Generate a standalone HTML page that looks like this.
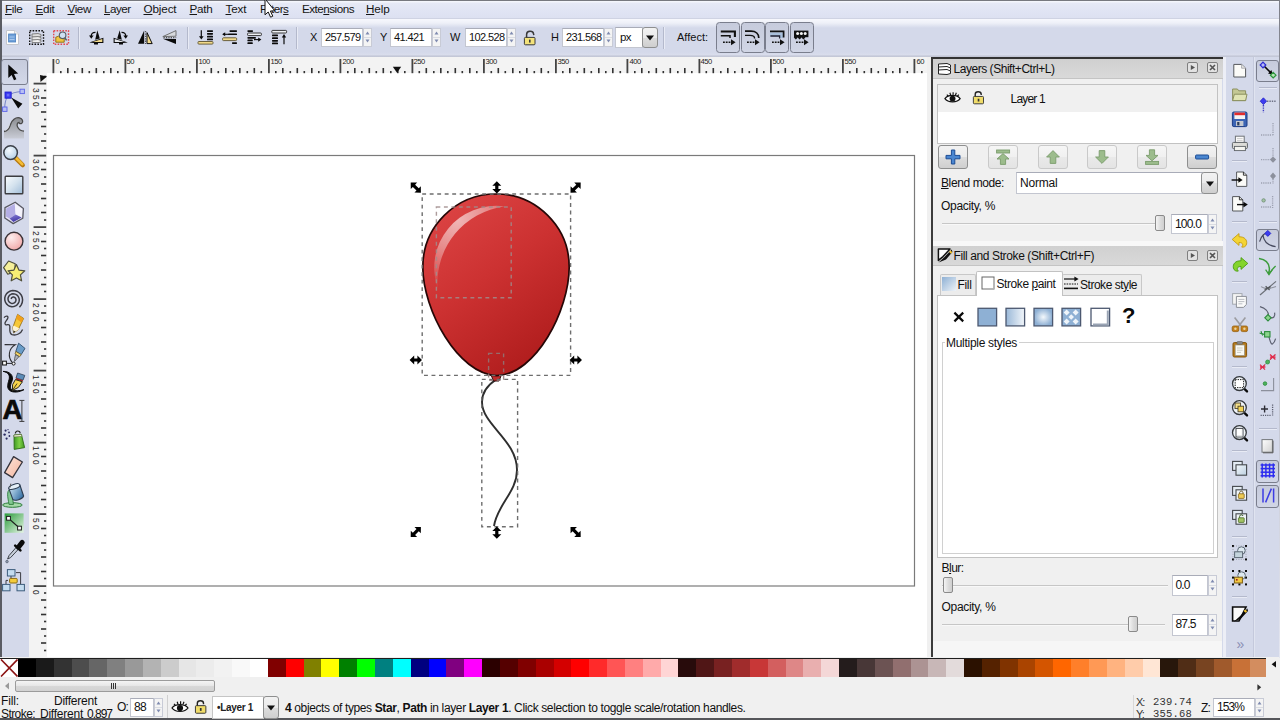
<!DOCTYPE html><html><head><meta charset="utf-8"><title>Inkscape</title><style>
*{box-sizing:border-box;margin:0;padding:0}
html,body{width:1280px;height:720px;overflow:hidden;background:#f0f0f0;font-family:"Liberation Sans", "DejaVu Sans", sans-serif;font-size:12px;color:#111;}
.a{position:absolute}
.t{position:absolute;white-space:nowrap;line-height:14px;height:14px}
u{text-decoration:underline;text-underline-offset:1px}
.inp{position:absolute;background:#fff;border:1px solid #c3c6d0;border-top-color:#a9acb8;font-size:11.5px;line-height:15px;padding-left:3px;white-space:nowrap;overflow:hidden}
.spin{position:absolute;width:9px;background:#f4f4f4;border:1px solid #c8cbd6}
.btn{position:absolute;border:1px solid #8e8f8f;border-radius:3px;background:linear-gradient(#f2f2f2,#ebebeb 50%,#dddddd 51%,#cfcfcf)}
.btnd{position:absolute;border:1px solid #c9c9c9;border-radius:3px;background:linear-gradient(#f6f6f6,#f0f0f0 50%,#e9e9e9 51%,#e4e4e4)}
.tog{position:absolute;border:1px solid #7a7e8d;border-radius:3px;background:linear-gradient(#c6cbdc,#d1d6e6)}
</style></head><body>
<div class="a" style="left:0;top:0;width:1280px;height:19px;background:linear-gradient(#f4f6fc 0,#f4f6fc 2px,#e6e9f6 3px,#e1e5f4 10px,#dde1f1 18px)"></div>
<div class="a" style="left:0;top:18px;width:1280px;height:1px;background:#cfd3e3"></div>
<div class="a" style="left:0;top:19px;width:1280px;height:38px;background:linear-gradient(#f7f8fd 0,#eef0f8 4px,#d4d9ea 9px,#d4d9ea 33px,#d9ddec 36px,#bfc3d3 37px,#c8ccdb 38px)"></div>
<div class="a" style="left:0;top:57px;width:29px;height:601px;background:#d4d9ea"></div>
<div class="a" style="left:1222px;top:57px;width:58px;height:601px;background:#d4d9ea"></div>
<div class="a" style="left:29px;top:57px;width:898px;height:600px;background:#fff"></div>
<div class="a" style="left:927px;top:57px;width:295px;height:600px;background:#f0f0f0"></div>
<div class="a" style="left:931px;top:57px;width:2px;height:600px;background:#3c3c3c"></div>
<div class="a" style="left:0;top:0;width:1280px;height:1px;background:#77797f"></div>
<div class="a" style="left:0;top:0;width:1.5px;height:720px;background:#5a5c63"></div>
<div class="a" style="left:0;top:718px;width:1280px;height:2px;background:#55565a"></div>
<div class="t" style="left:5px;top:2.1px;font-size:11.7px;letter-spacing:-0.338px;color:#151515;"><u>F</u>ile</div>
<div class="t" style="left:35.5px;top:2.1px;font-size:11.7px;letter-spacing:-0.290px;color:#151515;"><u>E</u>dit</div>
<div class="t" style="left:67.5px;top:2.1px;font-size:11.7px;letter-spacing:-0.412px;color:#151515;"><u>V</u>iew</div>
<div class="t" style="left:104px;top:2.1px;font-size:11.7px;letter-spacing:-0.553px;color:#151515;"><u>L</u>ayer</div>
<div class="t" style="left:143.5px;top:2.1px;font-size:11.7px;letter-spacing:-0.136px;color:#151515;"><u>O</u>bject</div>
<div class="t" style="left:189.5px;top:2.1px;font-size:11.7px;letter-spacing:-0.267px;color:#151515;"><u>P</u>ath</div>
<div class="t" style="left:225.5px;top:2.1px;font-size:11.7px;letter-spacing:-0.114px;color:#151515;"><u>T</u>ext</div>
<div class="t" style="left:260px;top:2.1px;font-size:11.7px;letter-spacing:-0.479px;color:#151515;">Filter<u>s</u></div>
<div class="t" style="left:302px;top:2.1px;font-size:11.7px;letter-spacing:-0.523px;color:#151515;">Exte<u>n</u>sions</div>
<div class="t" style="left:366px;top:2.1px;font-size:11.7px;letter-spacing:-0.141px;color:#151515;"><u>H</u>elp</div>
<svg class="a" style="left:5px;top:29px" width="15" height="17" viewBox="0 0 15 17" >
<path d="M1.5 1.5 L9.5 1.5 L13.5 5 L13.5 15.5 L1.5 15.5 Z" fill="#fdfdfd" stroke="#c4c6cc" stroke-width="1"/>
<path d="M9.5 1.5 L9.5 5 L13.5 5" fill="#eee" stroke="#c4c6cc" stroke-width="0.8"/>
<rect x="3.6" y="5" width="7" height="8" fill="#6fa0d8" stroke="#4a7fc0" stroke-width="0.8"/>
<path d="M4.5 8 L9.5 8 M4.5 10.5 L9.5 10.5" stroke="#a8c8ee" stroke-width="1"/></svg>
<svg class="a" style="left:28px;top:29px" width="17" height="17" viewBox="0 0 17 17" >
<rect x="1.7" y="1.7" width="13.8" height="13.6" fill="none" stroke="#111" stroke-width="1.4" stroke-dasharray="1.6 1.3"/>
<path d="M4 5 L10 4.5 L13 5.5 L13 7.5 L10 8.2 L4 8 Z" fill="#ddd" stroke="#777" stroke-width="0.9"/>
<path d="M4 8 L10 7.5 L13 8.5 L13 10.5 L10 11.2 L4 11 Z" fill="#e8e8e8" stroke="#777" stroke-width="0.9"/>
<path d="M4 11 L10 10.5 L13 11.5 L13 13 L10 13.6 L4 13.4 Z" fill="#f2f2f2" stroke="#777" stroke-width="0.9"/></svg>
<svg class="a" style="left:52px;top:29px" width="18" height="17" viewBox="0 0 18 17" >
<rect x="1.7" y="1.7" width="14.8" height="13.6" fill="none" stroke="#e44850" stroke-width="1.4" stroke-dasharray="1.6 1.3"/>
<path d="M3.8 8.2 L6.5 7.2 L8 8.2 L12.2 8.2 L12.2 13.2 L3.8 13.2 Z" fill="#f1c53e" stroke="#8a6a14" stroke-width="0.9"/>
<circle cx="10.6" cy="6.3" r="3.3" fill="#cfe0f3" stroke="#555c66" stroke-width="1.1"/>
<path d="M13 9 L14.6 11.4" stroke="#555c66" stroke-width="1.5"/></svg>
<div class="a" style="left:78px;top:27px;width:1px;height:22px;background:#b4b9cc"></div><div class="a" style="left:79px;top:27px;width:1px;height:22px;background:#e8ebf5"></div>
<svg class="a" style="left:88px;top:29px" width="17" height="17" viewBox="0 0 17 17" >
<path d="M9.3 1.3 L11.8 9.6 L7.2 10.8 Z" fill="#0a0a0a"/>
<path d="M1.2 13.6 L15.4 8.8 L15.4 14 L10 14 L10 15.6 L6 15.6 L6 14 Z" fill="#0a0a0a"/>
<path d="M4.5 13 L14.3 9.9 L14.3 13 Z" fill="#f1d98a"/>
<path d="M7.5 3.3 C4.5 3.2 3.2 5 3.2 7.2" fill="none" stroke="#0a0a0a" stroke-width="1.3"/>
<path d="M1 6.6 L5.6 6.6 L3.3 9.8 Z" fill="#0a0a0a"/></svg>
<svg class="a" style="left:112px;top:29px" width="17" height="17" viewBox="0 0 17 17" >
<g transform="translate(17 0) scale(-1 1)">
<path d="M9.3 1.3 L11.8 9.6 L7.2 10.8 Z" fill="#0a0a0a"/>
<path d="M1.2 13.6 L15.4 8.8 L15.4 14 L10 14 L10 15.6 L6 15.6 L6 14 Z" fill="#0a0a0a"/>
<path d="M4.5 13 L14.3 9.9 L14.3 13 Z" fill="#e4e6ea"/>
<path d="M7.5 3.3 C4.5 3.2 3.2 5 3.2 7.2" fill="none" stroke="#0a0a0a" stroke-width="1.3"/>
<path d="M1 6.6 L5.6 6.6 L3.3 9.8 Z" fill="#0a0a0a"/>
</g></svg>
<svg class="a" style="left:137px;top:29px" width="17" height="17" viewBox="0 0 17 17" >
<path d="M1 14.8 L7.2 1.6 L7.2 14.8 Z" fill="#0a0a0a"/>
<path d="M8.6 2 L8.6 15" stroke="#555" stroke-width="1.2" stroke-dasharray="1.3 1.1"/>
<path d="M10 3.6 L15.2 14.6 L10 14.6 Z" fill="#f1d98a" stroke="#0a0a0a" stroke-width="1"/></svg>
<svg class="a" style="left:161px;top:29px" width="17" height="17" viewBox="0 0 17 17" >
<path d="M1.8 7.6 L15 1.6 L15 7.2 Z" fill="#d8dade" stroke="#666" stroke-width="0.9"/>
<path d="M2.5 8.6 L15.2 8.6" stroke="#555" stroke-width="1.2" stroke-dasharray="1.3 1.1"/>
<path d="M1.8 9.8 L15 10 L15 15 Z" fill="#0a0a0a"/></svg>
<div class="a" style="left:187px;top:27px;width:1px;height:22px;background:#b4b9cc"></div><div class="a" style="left:188px;top:27px;width:1px;height:22px;background:#e8ebf5"></div>
<svg class="a" style="left:197px;top:29px" width="17" height="17" viewBox="0 0 17 17" >
<path d="M4.3 1.3 L4.3 9" stroke="#0a0a0a" stroke-width="1.2"/>
<path d="M2 7.2 L6.6 7.2 L4.3 10.6 Z" fill="#0a0a0a"/>
<g fill="#0a0a0a"><rect x="10" y="1.2" width="6" height="1.7" rx="0.6"/><rect x="10" y="4" width="6" height="1.7" rx="0.6"/><rect x="10" y="6.8" width="6" height="1.7" rx="0.6"/><rect x="10" y="9.6" width="6" height="1.7" rx="0.6"/></g>
<rect x="1" y="12.5" width="15" height="2.6" rx="0.8" fill="#f1d98a" stroke="#5d5330" stroke-width="0.9"/></svg>
<svg class="a" style="left:221px;top:29px" width="17" height="17" viewBox="0 0 17 17" >
<g fill="#0a0a0a"><rect x="8.5" y="1.2" width="7.5" height="1.7" rx="0.6"/><rect x="7" y="4.4" width="9" height="1.7" rx="0.6"/><rect x="11" y="13.2" width="5" height="1.7" rx="0.6"/></g>
<path d="M2 5.3 L7 5.3" stroke="#0a0a0a" stroke-width="1.1"/>
<path d="M1.2 5.3 L4.2 3.3 L4.2 7.3 Z" fill="#0a0a0a"/>
<rect x="1.6" y="8.8" width="14" height="2.8" rx="0.8" fill="#f1d98a" stroke="#5d5330" stroke-width="0.9"/>
<rect x="11" y="10.8" width="5" height="1.2" fill="#0a0a0a" opacity="0"/></svg>
<svg class="a" style="left:246px;top:29px" width="17" height="17" viewBox="0 0 17 17" >
<g fill="#0a0a0a"><rect x="1.4" y="1.2" width="5.6" height="1.7" rx="0.6"/><rect x="1.4" y="8" width="8.5" height="1.7" rx="0.6"/><rect x="1.4" y="10.6" width="5.4" height="1.7" rx="0.6"/><rect x="1.4" y="13.3" width="5.4" height="1.7" rx="0.6"/></g>
<rect x="1.6" y="4" width="13.8" height="2.6" rx="0.8" fill="#eef0f4" stroke="#222" stroke-width="0.9"/>
<path d="M8 10.6 L14 10.6" stroke="#0a0a0a" stroke-width="1.1"/>
<path d="M15.4 10.6 L12.2 8.4 L12.2 12.8 Z" fill="#0a0a0a"/></svg>
<svg class="a" style="left:270px;top:29px" width="18" height="17" viewBox="0 0 18 17" >
<rect x="1.8" y="1.4" width="14.8" height="2.6" rx="0.8" fill="#eef0f4" stroke="#222" stroke-width="0.9"/>
<g fill="#0a0a0a"><rect x="2" y="5.6" width="6" height="1.7" rx="0.6"/><rect x="2" y="8.3" width="6" height="1.7" rx="0.6"/><rect x="2" y="11" width="6" height="1.7" rx="0.6"/><rect x="2" y="13.6" width="6" height="1.7" rx="0.6"/></g>
<path d="M14 7 L14 15.2" stroke="#0a0a0a" stroke-width="1.2"/>
<path d="M11.8 8.4 L16.2 8.4 L14 5 Z" fill="#0a0a0a"/></svg>
<div class="a" style="left:296px;top:27px;width:1px;height:22px;background:#b4b9cc"></div><div class="a" style="left:297px;top:27px;width:1px;height:22px;background:#e8ebf5"></div>
<div class="t" style="left:310px;top:30px;font-size:11px;letter-spacing:-1.337px;">X</div><div class="inp" style="left:321px;top:28px;width:42px;height:19px"></div><div class="t" style="left:325px;top:30px;font-size:11px;letter-spacing:-0.609px;">257.579</div><div class="spin" style="left:363px;top:28px;height:19px"></div><svg class="a" style="left:363px;top:28px" width="9" height="19"><path d="M2.5 6.5 L6.5 6.5 L4.5 3.5 Z" fill="#7f8bb0"/><path d="M2.5 11.5 L6.5 11.5 L4.5 14.5 Z" fill="#7f8bb0"/><rect x="1" y="9" width="7" height="0.6" fill="#c8cbd6"/></svg>
<div class="t" style="left:380px;top:30px;font-size:11px;letter-spacing:-1.337px;">Y</div><div class="inp" style="left:390px;top:28px;width:42px;height:19px"></div><div class="t" style="left:394px;top:30px;font-size:11px;letter-spacing:-0.607px;">41.421</div><div class="spin" style="left:432px;top:28px;height:19px"></div><svg class="a" style="left:432px;top:28px" width="9" height="19"><path d="M2.5 6.5 L6.5 6.5 L4.5 3.5 Z" fill="#7f8bb0"/><path d="M2.5 11.5 L6.5 11.5 L4.5 14.5 Z" fill="#7f8bb0"/><rect x="1" y="9" width="7" height="0.6" fill="#c8cbd6"/></svg>
<div class="t" style="left:450px;top:30px;font-size:11px;letter-spacing:-0.382px;">W</div><div class="inp" style="left:465px;top:28px;width:42px;height:19px"></div><div class="t" style="left:469px;top:30px;font-size:11px;letter-spacing:-0.609px;">102.528</div><div class="spin" style="left:507px;top:28px;height:19px"></div><svg class="a" style="left:507px;top:28px" width="9" height="19"><path d="M2.5 6.5 L6.5 6.5 L4.5 3.5 Z" fill="#7f8bb0"/><path d="M2.5 11.5 L6.5 11.5 L4.5 14.5 Z" fill="#7f8bb0"/><rect x="1" y="9" width="7" height="0.6" fill="#c8cbd6"/></svg>
<div class="t" style="left:551px;top:30px;font-size:11px;letter-spacing:-0.944px;">H</div><div class="inp" style="left:562px;top:28px;width:42px;height:19px"></div><div class="t" style="left:566px;top:30px;font-size:11px;letter-spacing:-0.609px;">231.568</div><div class="spin" style="left:604px;top:28px;height:19px"></div><svg class="a" style="left:604px;top:28px" width="9" height="19"><path d="M2.5 6.5 L6.5 6.5 L4.5 3.5 Z" fill="#7f8bb0"/><path d="M2.5 11.5 L6.5 11.5 L4.5 14.5 Z" fill="#7f8bb0"/><rect x="1" y="9" width="7" height="0.6" fill="#c8cbd6"/></svg>
<svg class="a" style="left:522px;top:29px" width="16" height="17" viewBox="0 0 16 17" >
<path d="M4.6 9 L4.6 5.4 C4.6 1.6 11 1.2 11.6 5 L11.8 6.2" fill="none" stroke="#3a3a3a" stroke-width="1.5"/>
<rect x="2.4" y="8.4" width="10.6" height="7.4" rx="1" fill="#f3e27a" stroke="#3a3a3a" stroke-width="1"/>
<rect x="7" y="10.6" width="1.6" height="3" fill="#3a3a3a"/></svg>
<div class="inp" style="left:615px;top:27px;width:28px;height:21px"></div>
<div class="t" style="left:620px;top:30px;font-size:11.5px;letter-spacing:-0.573px;">px</div>
<div class="btn" style="left:642px;top:27px;width:16px;height:21px"></div>
<svg class="a" style="left:645px;top:34px" width="10" height="8" viewBox="0 0 10 8" ><path d="M1 1.5 L9 1.5 L5 6.5 Z" fill="#111"/></svg>
<div class="a" style="left:663px;top:27px;width:1px;height:22px;background:#b4b9cc"></div><div class="a" style="left:664px;top:27px;width:1px;height:22px;background:#e8ebf5"></div>
<div class="t" style="left:677px;top:30px;font-size:11px;letter-spacing:0.003px;">Affect:</div>
<div class="tog" style="left:716.4px;top:22px;width:23.6px;height:31px;border-width:1.4px;border-radius:3.5px"></div>
<div class="tog" style="left:741px;top:22px;width:23.6px;height:31px;border-width:1.4px;border-radius:3.5px"></div>
<div class="tog" style="left:765.4px;top:22px;width:23.6px;height:31px;border-width:1.4px;border-radius:3.5px"></div>
<div class="tog" style="left:790px;top:22px;width:23.6px;height:31px;border-width:1.4px;border-radius:3.5px"></div>
<svg class="a" style="left:717px;top:22px" width="24" height="31" viewBox="0 0 24 31" ><path d="M3.8 9.5 L17.9 9.5 L17.9 15" fill="none" stroke="#111" stroke-width="2.1"/><path d="M3.8 13.8 L13 13.8 L13 16" fill="none" stroke="#111" stroke-width="1.5"/><path d="M6 20.3 L13.4 20.3" stroke="#111" stroke-width="1.5" stroke-dasharray="1.8 1"/><path d="M18.6 20.3 L14 17.3 L14 23.3 Z" fill="#111"/></svg>
<svg class="a" style="left:741.4px;top:22px" width="24" height="31" viewBox="0 0 24 31" ><path d="M4 9.2 L10 9.2 C15 9.2 17.8 12 17.8 16" fill="none" stroke="#111" stroke-width="1.7"/><path d="M4 13.4 L9 13.4 C12 13.4 13.6 14.4 13.6 16.4" fill="none" stroke="#111" stroke-width="1.4"/><path d="M6 20.3 L13.4 20.3" stroke="#111" stroke-width="1.5" stroke-dasharray="1.8 1"/><path d="M18.6 20.3 L14 17.3 L14 23.3 Z" fill="#111"/></svg>
<svg class="a" style="left:765.8px;top:22px" width="24" height="31" viewBox="0 0 24 31" ><path d="M4 12.6 L15 12.6 L15 16" fill="none" stroke="#a9c0dc" stroke-width="4"/><path d="M4 9.4 L17.6 9.4 L17.6 15.4" fill="none" stroke="#111" stroke-width="1.7"/><path d="M4.4 14 L13.6 14 L13.6 16.4" fill="none" stroke="#223" stroke-width="1.3"/><path d="M6 20.3 L13.4 20.3" stroke="#111" stroke-width="1.5" stroke-dasharray="1.8 1"/><path d="M18.6 20.3 L14 17.3 L14 23.3 Z" fill="#111"/></svg>
<svg class="a" style="left:790.4px;top:22px" width="24" height="31" viewBox="0 0 24 31" ><rect x="4" y="8.6" width="14.4" height="6.6" fill="#111"/><g fill="#f4f4f4"><circle cx="7.6" cy="11.6" r="1.5"/><circle cx="11.4" cy="11.6" r="1.5"/><circle cx="15.2" cy="11.6" r="1.5"/></g><g fill="#111"><path d="M5.8 13.2 L7.8 15.6 L5.8 17.4 L3.8 15.6 Z"/><path d="M9.6 13.2 L11.6 15.6 L9.6 17.4 L7.6 15.6 Z"/><path d="M13.4 13.2 L15.4 15.6 L13.4 17.4 L11.4 15.6 Z"/></g><path d="M6 20.3 L13.4 20.3" stroke="#111" stroke-width="1.5" stroke-dasharray="1.8 1"/><path d="M18.6 20.3 L14 17.3 L14 23.3 Z" fill="#111"/></svg>
<div class="tog" style="left:1px;top:59px;width:27px;height:26px;background:linear-gradient(#c6cbdc,#d3d8e8)"></div>
<svg class="a" style="left:0px;top:58px" width="30" height="28" viewBox="0 0 30 28" ><path d="M8.3 6.5 L8.3 20 L11.6 17 L14 22.3 L16.4 21.2 L14 16 L18.2 15.6 Z" fill="#0a0a0a"/></svg>
<svg class="a" style="left:0px;top:86px" width="30" height="28" viewBox="0 0 30 28" ><path d="M4.8 22.5 C4.5 12 8 6 22 5.5" fill="none" stroke="#7a88c8" stroke-width="1.1"/>
<rect x="5" y="6" width="6.2" height="6.2" fill="#3a3af0" stroke="#1a1ad0" stroke-width="0.8"/>
<rect x="6.8" y="7.8" width="2.6" height="2.6" fill="#6a6af8"/>
<rect x="20" y="3.2" width="4.4" height="4.4" fill="#b8c0f4" stroke="#5a62e8" stroke-width="0.9"/>
<rect x="2.6" y="21" width="4.4" height="4.4" fill="#b8c0f4" stroke="#5a62e8" stroke-width="0.9"/>
<path d="M11.2 11.4 L22.4 17.8 L18.2 22.6 Z" fill="#0a0a0a"/></svg>
<svg class="a" style="left:0px;top:114px" width="30" height="28" viewBox="0 0 30 28" ><defs><linearGradient id="twg" x1="0" y1="0" x2="0" y2="1"><stop offset="0" stop-color="#8a8c90"/><stop offset="1" stop-color="#c9ccd6"/></linearGradient></defs>
<path d="M4 17.5 C8 17 9.5 14 10.5 10.5 C11.8 6 15.5 3 19.5 3.8 C22.5 4.5 23.6 7.6 21.8 9.2 C20.6 10.2 19 9.6 19 8.4 C17.2 8.6 16.6 11 17.6 13 C19 16 22 17 24 17.2 L24 24.5 L4 24.5 Z" fill="url(#twg)"/>
<path d="M4 17.5 C8 17 9.5 14 10.5 10.5 C11.8 6 15.5 3 19.5 3.8 C22.5 4.5 23.6 7.6 21.8 9.2 C20.6 10.2 19 9.6 19 8.4 C17.2 8.6 16.6 11 17.6 13 C19 16 22 17 24 17.2" fill="none" stroke="#4a4a4a" stroke-width="1.3"/>
<path d="M5 16.3 C8 15.6 8.6 13 9.4 10" fill="none" stroke="#d8dae0" stroke-width="0.9"/></svg>
<svg class="a" style="left:0px;top:143px" width="30" height="28" viewBox="0 0 30 28" ><defs><radialGradient id="zg" cx="0.4" cy="0.35" r="0.7"><stop offset="0" stop-color="#f4f9fd"/><stop offset="1" stop-color="#b4cfe6"/></radialGradient></defs>
<path d="M15.5 14.8 L22.6 22" stroke="#b87a10" stroke-width="4.6" stroke-linecap="round"/>
<path d="M16.2 15 L22.2 21.2" stroke="#f4bc34" stroke-width="2.6" stroke-linecap="round"/>
<circle cx="10.6" cy="9.6" r="6.8" fill="url(#zg)" stroke="#3c4048" stroke-width="1.5"/></svg>
<svg class="a" style="left:0px;top:171px" width="30" height="28" viewBox="0 0 30 28" ><defs><linearGradient id="rg" x1="0" y1="0" x2="1" y2="1"><stop offset="0" stop-color="#fafcfe"/><stop offset="0.5" stop-color="#d4e2ee"/><stop offset="1" stop-color="#9fbcd8"/></linearGradient></defs>
<rect x="5.2" y="5.3" width="17.6" height="17.4" rx="0.8" fill="url(#rg)" stroke="#3c3c40" stroke-width="1.4"/></svg>
<svg class="a" style="left:0px;top:199px" width="30" height="28" viewBox="0 0 30 28" ><defs><linearGradient id="bxb" x1="0" y1="0" x2="0.4" y2="1"><stop offset="0" stop-color="#8a82d6"/><stop offset="1" stop-color="#3f34a4"/></linearGradient></defs>
<path d="M15.2 3.2 L23.4 9.4 L22.8 19.2 L13.2 24.6 L4.8 19 L5 8.6 Z" fill="#e6e4f4" stroke="#585862" stroke-width="1.3" stroke-linejoin="round"/>
<path d="M6.2 9.4 L14.8 4.8 L15.6 15.6 L9.6 19.4 L6 17.6 Z" fill="#b4aee4"/>
<path d="M14.8 4.8 L22.2 10 L21.6 18.4 L15.6 15.6 Z" fill="#f4f3fb"/>
<path d="M9.6 19.4 L15.6 15.6 L21.6 18.4 L13.4 23 Z" fill="url(#bxb)"/></svg>
<svg class="a" style="left:0px;top:227px" width="30" height="28" viewBox="0 0 30 28" ><defs><radialGradient id="cg" cx="0.35" cy="0.3" r="0.8"><stop offset="0" stop-color="#fdeeee"/><stop offset="1" stop-color="#f0a4a4"/></radialGradient></defs>
<circle cx="14" cy="14.2" r="8.9" fill="url(#cg)" stroke="#3a3236" stroke-width="1.4"/></svg>
<svg class="a" style="left:0px;top:256px" width="30" height="28" viewBox="0 0 30 28" ><path d="M8.6 5 L15.2 7.8 L14.8 15.6 L7.8 18.2 L3.6 11.6 Z" fill="#f6f09a" stroke="#50503c" stroke-width="1.2" stroke-linejoin="round"/>
<path d="M16.4 8.6 L18.9 14.1 L24.8 14.8 L20.4 18.9 L21.6 24.8 L16.4 21.9 L11.2 24.8 L12.4 18.9 L8 14.8 L13.9 14.1 Z" fill="#f8ee74" stroke="#50503c" stroke-width="1.2" stroke-linejoin="round"/></svg>
<svg class="a" style="left:0px;top:284px" width="30" height="28" viewBox="0 0 30 28" ><path d="M11.2 15.0 L11.3 14.5 L11.5 14.1 L11.8 13.6 L12.3 13.3 L12.9 13.1 L13.5 13.1 L14.2 13.2 L14.9 13.6 L15.4 14.2 L15.8 14.9 L16.0 15.7 L15.9 16.6 L15.6 17.5 L15.0 18.3 L14.2 18.9 L13.2 19.3 L12.2 19.4 L11.0 19.2 L10.0 18.7 L9.1 17.9 L8.4 16.9 L8.1 15.6 L8.0 14.3 L8.4 13.0 L9.1 11.8 L10.1 10.8 L11.4 10.1 L12.9 9.8 L14.4 9.9 L15.9 10.4 L17.3 11.3 L18.3 12.6 L19.0 14.2 L19.3 15.9 L19.0 17.7 L18.3 19.3 L17.1 20.8 L15.6 21.9 L13.8 22.5 L11.8 22.7 L9.8 22.3 L8.0 21.3 L6.5 19.9 L5.4 18.1 L4.8 16.0 L4.8 13.8 L5.4 11.6 L6.6 9.6 L8.3 8.1 L10.4 7.0 L12.7 6.5 L15.2 6.7 L17.5 7.5 L19.6 9.0 L21.2 10.9 L22.2 13.3 L22.6 15.9 L22.2 18.6 L21.1 21.1 L19.4 23.2" fill="none" stroke="#3c3c44" stroke-width="1.5" stroke-linejoin="round"/></svg>
<svg class="a" style="left:0px;top:311px" width="30" height="28" viewBox="0 0 30 28" ><path d="M4 6.6 C6 4.4 9 4.8 7.6 7.6 C6.6 9.6 3.6 12.4 5.6 13.6 C7.2 14.4 9.4 12.4 9.8 15 C10.2 18 8.6 22.4 12 23.6 C16.4 25 21 22.4 22.6 18.4" fill="none" stroke="#3a3a40" stroke-width="1.3"/>
<path d="M17.6 3.4 L23.6 7.4 L18.4 18.4 L13.6 22 L12.8 16.4 Z" fill="#f6c838" stroke="#8a6410" stroke-width="0.8"/>
<path d="M17.6 3.4 L23.6 7.4 L21.6 11.6 L15.8 7.6 Z" fill="#f0a01c"/>
<path d="M13.6 14.6 L19.2 17.2 L18.4 18.4 L13.6 22 L12.8 16.4 Z" fill="#fbf2d4"/>
<path d="M13.2 19.4 L15.6 20.6 L13.6 22 Z" fill="#2a2a2a"/></svg>
<svg class="a" style="left:0px;top:340px" width="30" height="28" viewBox="0 0 30 28" ><path d="M4.6 4.6 L15.2 4.8 C8.6 8.6 7.4 17 12.4 22.6" fill="none" stroke="#2c2c30" stroke-width="1.1"/>
<path d="M6.4 23.4 L13.4 23.4" stroke="#2c2c30" stroke-width="1"/>
<rect x="2.6" y="21.2" width="3.8" height="3.8" fill="#fff" stroke="#1c1c1c" stroke-width="1.1"/>
<circle cx="13.6" cy="23.6" r="1.5" fill="#fff" stroke="#1c1c1c" stroke-width="1"/>
<path d="M18.6 3.2 L25 8.4 L21.2 14.6 L15.8 11.4 Z" fill="#6a9cc8" stroke="#2c4c6c" stroke-width="0.9"/>
<path d="M15.8 11.4 L21.2 14.6 L19.6 16.8 L15 14 Z" fill="#f2d46a" stroke="#6c5c2c" stroke-width="0.8"/>
<path d="M15.6 14.6 L19 16.6 L15.8 20 L14.6 21.4 L14.6 18.6 Z" fill="#b0b4bc" stroke="#44484c" stroke-width="0.8"/></svg>
<svg class="a" style="left:0px;top:368px" width="30" height="28" viewBox="0 0 30 28" ><path d="M3 3.4 C8 4.2 10.4 7.2 9 11.8 C7.8 15.8 6.6 20 9.6 22.4 C13 25 19 24.4 24 21.6 C20 23 14.4 23.4 11.6 21.6 C9.4 20 10.6 16.6 12 13 C14 7.6 9.6 3 3 3.4 Z" fill="#0a0a0a" stroke="#0a0a0a" stroke-width="1"/>
<path d="M17.6 5 L24.8 7.4 L23 12.2 L16 10 Z" fill="#5c8cb8" stroke="#2a3c54" stroke-width="0.8"/>
<path d="M16 10 L23 12.2 L22.4 13.8 L15.4 11.6 Z" fill="#a02424"/>
<path d="M15.4 11.6 L22.4 13.8 L18.4 19.4 L12.4 22.4 L12.6 16.6 Z" fill="#f6d44c" stroke="#2a2a1c" stroke-width="1"/>
<path d="M12.8 21.8 L17 15.6" stroke="#2a2a1c" stroke-width="0.9"/></svg>
<div class="t" style="left:2.5px;top:397px;width:24px;height:26px;line-height:26px;font-size:27.5px;font-weight:bold;color:#0a0a0a;letter-spacing:-1px;-webkit-text-stroke:0.7px #0a0a0a">A</div>
<svg class="a" style="left:18px;top:399px" width="8" height="24" viewBox="0 0 8 24" ><path d="M1.4 1.4 L6.4 1.4 M3.9 1.4 L3.9 22.4 M1.4 22.4 L6.4 22.4" fill="none" stroke="#3a3a3a" stroke-width="1"/></svg>
<svg class="a" style="left:0px;top:425px" width="30" height="28" viewBox="0 0 30 28" ><defs><linearGradient id="spg" x1="0" y1="0" x2="1" y2="0"><stop offset="0" stop-color="#3f9a22"/><stop offset="0.5" stop-color="#7fd048"/><stop offset="1" stop-color="#3f9a22"/></linearGradient></defs>
<g fill="#2a2a60"><circle cx="5.6" cy="5.6" r="1.1"/><circle cx="4.6" cy="9.6" r="1.2"/><circle cx="6.6" cy="13.6" r="1.1"/><circle cx="9" cy="7.4" r="0.9"/><circle cx="9.4" cy="11" r="0.9"/><circle cx="8" cy="4.6" r="0.7"/></g>
<path d="M15.4 8.6 C15.4 5.4 20 5 20.2 8.4" fill="none" stroke="#2a2a2a" stroke-width="1.2"/>
<path d="M14 10 L21.4 9.4 L24.6 22.6 L14.2 24.4 Z" fill="url(#spg)" stroke="#2c6c14" stroke-width="0.9"/>
<path d="M14 10 L21.4 9.4 L21.8 11.4 L14 12 Z" fill="#eef0d8" stroke="#5c6c3c" stroke-width="0.6"/></svg>
<svg class="a" style="left:0px;top:453px" width="30" height="28" viewBox="0 0 30 28" ><defs><linearGradient id="erg" x1="0" y1="0" x2="1" y2="1"><stop offset="0" stop-color="#fde6dc"/><stop offset="1" stop-color="#f4b49c"/></linearGradient></defs>
<path d="M13.6 3.6 L22.4 9 L12.6 24.6 L4.6 19.6 Z" fill="url(#erg)" stroke="#34343c" stroke-width="1.3" stroke-linejoin="round"/></svg>
<svg class="a" style="left:0px;top:481px" width="30" height="28" viewBox="0 0 30 28" ><defs><linearGradient id="bkg" x1="0" y1="0" x2="1" y2="0.6"><stop offset="0" stop-color="#d4e6f2"/><stop offset="0.5" stop-color="#8cb4d4"/><stop offset="1" stop-color="#3c74a8"/></linearGradient></defs>
<ellipse cx="12.4" cy="24" rx="9.8" ry="2.3" fill="#a4d8a8" stroke="#2c7c3c" stroke-width="1"/>
<path d="M9.6 8.4 C6.6 10.6 7.6 15.6 9 23.4 L13.4 23.4 C12.6 17 12 13.6 13.4 11 Z" fill="#84c894" stroke="#2c7c3c" stroke-width="0.9"/>
<path d="M8.8 7.4 L12.8 18.4 C14.6 20.6 22.8 18 23.6 15 L19.8 3.8 Z" fill="url(#bkg)" stroke="#2c3c50" stroke-width="1.1" stroke-linejoin="round"/>
<ellipse cx="14.3" cy="5.6" rx="5.8" ry="2.3" transform="rotate(-18 14.3 5.6)" fill="#e4f0f8" stroke="#2c3c50" stroke-width="1"/>
<path d="M10.8 2.6 L10 6.6" stroke="#5c5c5c" stroke-width="1"/></svg>
<svg class="a" style="left:0px;top:509px" width="30" height="28" viewBox="0 0 30 28" ><defs><linearGradient id="grg" x1="0" y1="0" x2="1" y2="1"><stop offset="0" stop-color="#2c9c3c"/><stop offset="1" stop-color="#e4f4e4"/></linearGradient></defs>
<rect x="4.6" y="4.4" width="19" height="19.4" fill="url(#grg)"/>
<path d="M8.6 9.4 L19.4 19" stroke="#1c1c1c" stroke-width="1.2"/>
<rect x="6.6" y="7.4" width="3.8" height="3.8" fill="#fff" stroke="#1c1c1c" stroke-width="1"/>
<rect x="17.6" y="17.2" width="3.8" height="3.8" fill="#fff" stroke="#1c1c1c" stroke-width="1"/></svg>
<svg class="a" style="left:0px;top:537px" width="30" height="28" viewBox="0 0 30 28" ><path d="M17 9.4 L9 18.6 L7.6 22 L10.6 20.6 L19 11.6 Z" fill="#c8d0dc" stroke="#3c4048" stroke-width="1"/>
<path d="M15.2 8.6 L20.4 13.4" stroke="#0a0a0a" stroke-width="2.6" stroke-linecap="round"/>
<path d="M18.4 10.2 L22.2 5.4" stroke="#0a0a0a" stroke-width="5" stroke-linecap="round"/>
<circle cx="7" cy="24.6" r="1.3" fill="#8c98ac" stroke="#4c5464" stroke-width="0.6"/></svg>
<svg class="a" style="left:0px;top:566px" width="30" height="28" viewBox="0 0 30 28" ><path d="M11 9 L11 13 M16 6.6 L20.6 6.6 L20.6 18 M6 18 L6 14.4 L8 14.4" fill="none" stroke="#3c3c44" stroke-width="1"/>
<rect x="7.4" y="3.6" width="7.6" height="6.4" fill="#c4dcf0" stroke="#3c5c7c" stroke-width="1"/>
<rect x="2.6" y="18.4" width="7.4" height="6.4" fill="#c4dcf0" stroke="#3c5c7c" stroke-width="1"/>
<rect x="17" y="18.4" width="7.4" height="6.4" fill="#c4dcf0" stroke="#3c5c7c" stroke-width="1"/>
<rect x="9.6" y="12.4" width="7.6" height="4.6" rx="1" fill="#f4cc3c" stroke="#8c6c14" stroke-width="1"/></svg>
<div class="a" style="left:29px;top:57px;width:898px;height:16px;background:#f3f3f3"></div>
<div class="a" style="left:29px;top:73px;width:17.5px;height:584px;background:#f3f3f3"></div>
<svg class="a" style="left:0;top:0" width="1280" height="720"><rect x="52.5" y="59" width="1.8" height="14.2" fill="#444"/><rect x="60.0" y="71" width="1.6" height="2.2" fill="#333"/><rect x="67.0" y="68" width="1.6" height="5.2" fill="#333"/><rect x="74.0" y="71" width="1.6" height="2.2" fill="#333"/><rect x="81.5" y="68" width="1.6" height="5.2" fill="#333"/><rect x="88.5" y="71" width="1.6" height="2.2" fill="#333"/><rect x="95.5" y="68" width="1.6" height="5.2" fill="#333"/><rect x="103.0" y="71" width="1.6" height="2.2" fill="#333"/><rect x="110.0" y="68" width="1.6" height="5.2" fill="#333"/><rect x="117.0" y="71" width="1.6" height="2.2" fill="#333"/><rect x="124.5" y="59" width="1.8" height="14.2" fill="#444"/><rect x="131.5" y="71" width="1.6" height="2.2" fill="#333"/><rect x="138.5" y="68" width="1.6" height="5.2" fill="#333"/><rect x="146.0" y="71" width="1.6" height="2.2" fill="#333"/><rect x="153.0" y="68" width="1.6" height="5.2" fill="#333"/><rect x="160.0" y="71" width="1.6" height="2.2" fill="#333"/><rect x="167.5" y="68" width="1.6" height="5.2" fill="#333"/><rect x="174.5" y="71" width="1.6" height="2.2" fill="#333"/><rect x="182.0" y="68" width="1.6" height="5.2" fill="#333"/><rect x="189.0" y="71" width="1.6" height="2.2" fill="#333"/><rect x="196.0" y="59" width="1.8" height="14.2" fill="#444"/><rect x="203.5" y="71" width="1.6" height="2.2" fill="#333"/><rect x="210.5" y="68" width="1.6" height="5.2" fill="#333"/><rect x="217.5" y="71" width="1.6" height="2.2" fill="#333"/><rect x="225.0" y="68" width="1.6" height="5.2" fill="#333"/><rect x="232.0" y="71" width="1.6" height="2.2" fill="#333"/><rect x="239.0" y="68" width="1.6" height="5.2" fill="#333"/><rect x="246.5" y="71" width="1.6" height="2.2" fill="#333"/><rect x="253.5" y="68" width="1.6" height="5.2" fill="#333"/><rect x="260.5" y="71" width="1.6" height="2.2" fill="#333"/><rect x="268.0" y="59" width="1.8" height="14.2" fill="#444"/><rect x="275.0" y="71" width="1.6" height="2.2" fill="#333"/><rect x="282.0" y="68" width="1.6" height="5.2" fill="#333"/><rect x="289.5" y="71" width="1.6" height="2.2" fill="#333"/><rect x="296.5" y="68" width="1.6" height="5.2" fill="#333"/><rect x="303.5" y="71" width="1.6" height="2.2" fill="#333"/><rect x="311.0" y="68" width="1.6" height="5.2" fill="#333"/><rect x="318.0" y="71" width="1.6" height="2.2" fill="#333"/><rect x="325.0" y="68" width="1.6" height="5.2" fill="#333"/><rect x="332.5" y="71" width="1.6" height="2.2" fill="#333"/><rect x="339.5" y="59" width="1.8" height="14.2" fill="#444"/><rect x="347.0" y="71" width="1.6" height="2.2" fill="#333"/><rect x="354.0" y="68" width="1.6" height="5.2" fill="#333"/><rect x="361.0" y="71" width="1.6" height="2.2" fill="#333"/><rect x="368.5" y="68" width="1.6" height="5.2" fill="#333"/><rect x="375.5" y="71" width="1.6" height="2.2" fill="#333"/><rect x="382.5" y="68" width="1.6" height="5.2" fill="#333"/><rect x="390.0" y="71" width="1.6" height="2.2" fill="#333"/><rect x="397.0" y="68" width="1.6" height="5.2" fill="#333"/><rect x="404.0" y="71" width="1.6" height="2.2" fill="#333"/><rect x="411.5" y="59" width="1.8" height="14.2" fill="#444"/><rect x="418.5" y="71" width="1.6" height="2.2" fill="#333"/><rect x="425.5" y="68" width="1.6" height="5.2" fill="#333"/><rect x="433.0" y="71" width="1.6" height="2.2" fill="#333"/><rect x="440.0" y="68" width="1.6" height="5.2" fill="#333"/><rect x="447.0" y="71" width="1.6" height="2.2" fill="#333"/><rect x="454.5" y="68" width="1.6" height="5.2" fill="#333"/><rect x="461.5" y="71" width="1.6" height="2.2" fill="#333"/><rect x="469.0" y="68" width="1.6" height="5.2" fill="#333"/><rect x="476.0" y="71" width="1.6" height="2.2" fill="#333"/><rect x="483.0" y="59" width="1.8" height="14.2" fill="#444"/><rect x="490.5" y="71" width="1.6" height="2.2" fill="#333"/><rect x="497.5" y="68" width="1.6" height="5.2" fill="#333"/><rect x="504.5" y="71" width="1.6" height="2.2" fill="#333"/><rect x="512.0" y="68" width="1.6" height="5.2" fill="#333"/><rect x="519.0" y="71" width="1.6" height="2.2" fill="#333"/><rect x="526.0" y="68" width="1.6" height="5.2" fill="#333"/><rect x="533.5" y="71" width="1.6" height="2.2" fill="#333"/><rect x="540.5" y="68" width="1.6" height="5.2" fill="#333"/><rect x="547.5" y="71" width="1.6" height="2.2" fill="#333"/><rect x="555.0" y="59" width="1.8" height="14.2" fill="#444"/><rect x="562.0" y="71" width="1.6" height="2.2" fill="#333"/><rect x="569.0" y="68" width="1.6" height="5.2" fill="#333"/><rect x="576.5" y="71" width="1.6" height="2.2" fill="#333"/><rect x="583.5" y="68" width="1.6" height="5.2" fill="#333"/><rect x="590.5" y="71" width="1.6" height="2.2" fill="#333"/><rect x="598.0" y="68" width="1.6" height="5.2" fill="#333"/><rect x="605.0" y="71" width="1.6" height="2.2" fill="#333"/><rect x="612.0" y="68" width="1.6" height="5.2" fill="#333"/><rect x="619.5" y="71" width="1.6" height="2.2" fill="#333"/><rect x="626.5" y="59" width="1.8" height="14.2" fill="#444"/><rect x="634.0" y="71" width="1.6" height="2.2" fill="#333"/><rect x="641.0" y="68" width="1.6" height="5.2" fill="#333"/><rect x="648.0" y="71" width="1.6" height="2.2" fill="#333"/><rect x="655.5" y="68" width="1.6" height="5.2" fill="#333"/><rect x="662.5" y="71" width="1.6" height="2.2" fill="#333"/><rect x="669.5" y="68" width="1.6" height="5.2" fill="#333"/><rect x="677.0" y="71" width="1.6" height="2.2" fill="#333"/><rect x="684.0" y="68" width="1.6" height="5.2" fill="#333"/><rect x="691.0" y="71" width="1.6" height="2.2" fill="#333"/><rect x="698.5" y="59" width="1.8" height="14.2" fill="#444"/><rect x="705.5" y="71" width="1.6" height="2.2" fill="#333"/><rect x="712.5" y="68" width="1.6" height="5.2" fill="#333"/><rect x="720.0" y="71" width="1.6" height="2.2" fill="#333"/><rect x="727.0" y="68" width="1.6" height="5.2" fill="#333"/><rect x="734.0" y="71" width="1.6" height="2.2" fill="#333"/><rect x="741.5" y="68" width="1.6" height="5.2" fill="#333"/><rect x="748.5" y="71" width="1.6" height="2.2" fill="#333"/><rect x="756.0" y="68" width="1.6" height="5.2" fill="#333"/><rect x="763.0" y="71" width="1.6" height="2.2" fill="#333"/><rect x="770.0" y="59" width="1.8" height="14.2" fill="#444"/><rect x="777.5" y="71" width="1.6" height="2.2" fill="#333"/><rect x="784.5" y="68" width="1.6" height="5.2" fill="#333"/><rect x="791.5" y="71" width="1.6" height="2.2" fill="#333"/><rect x="799.0" y="68" width="1.6" height="5.2" fill="#333"/><rect x="806.0" y="71" width="1.6" height="2.2" fill="#333"/><rect x="813.0" y="68" width="1.6" height="5.2" fill="#333"/><rect x="820.5" y="71" width="1.6" height="2.2" fill="#333"/><rect x="827.5" y="68" width="1.6" height="5.2" fill="#333"/><rect x="834.5" y="71" width="1.6" height="2.2" fill="#333"/><rect x="842.0" y="59" width="1.8" height="14.2" fill="#444"/><rect x="849.0" y="71" width="1.6" height="2.2" fill="#333"/><rect x="856.0" y="68" width="1.6" height="5.2" fill="#333"/><rect x="863.5" y="71" width="1.6" height="2.2" fill="#333"/><rect x="870.5" y="68" width="1.6" height="5.2" fill="#333"/><rect x="877.5" y="71" width="1.6" height="2.2" fill="#333"/><rect x="885.0" y="68" width="1.6" height="5.2" fill="#333"/><rect x="892.0" y="71" width="1.6" height="2.2" fill="#333"/><rect x="899.0" y="68" width="1.6" height="5.2" fill="#333"/><rect x="906.5" y="71" width="1.6" height="2.2" fill="#333"/><rect x="913.5" y="59" width="1.8" height="14.2" fill="#444"/><rect x="921.0" y="71" width="1.6" height="2.2" fill="#333"/><rect x="44" y="649.7" width="2.2" height="1.6" fill="#333"/><rect x="41" y="642.2" width="5.2" height="1.6" fill="#333"/><rect x="44" y="635.2" width="2.2" height="1.6" fill="#333"/><rect x="41" y="628.2" width="5.2" height="1.6" fill="#333"/><rect x="44" y="620.7" width="2.2" height="1.6" fill="#333"/><rect x="41" y="613.7" width="5.2" height="1.6" fill="#333"/><rect x="44" y="606.7" width="2.2" height="1.6" fill="#333"/><rect x="41" y="599.2" width="5.2" height="1.6" fill="#333"/><rect x="44" y="592.2" width="2.2" height="1.6" fill="#333"/><rect x="33.6" y="585.2" width="12.6" height="1.8" fill="#444"/><rect x="44" y="577.7" width="2.2" height="1.6" fill="#333"/><rect x="41" y="570.7" width="5.2" height="1.6" fill="#333"/><rect x="44" y="563.7" width="2.2" height="1.6" fill="#333"/><rect x="41" y="556.2" width="5.2" height="1.6" fill="#333"/><rect x="44" y="549.2" width="2.2" height="1.6" fill="#333"/><rect x="41" y="542.2" width="5.2" height="1.6" fill="#333"/><rect x="44" y="534.7" width="2.2" height="1.6" fill="#333"/><rect x="41" y="527.7" width="5.2" height="1.6" fill="#333"/><rect x="44" y="520.2" width="2.2" height="1.6" fill="#333"/><rect x="33.6" y="513.2" width="12.6" height="1.8" fill="#444"/><rect x="44" y="506.2" width="2.2" height="1.6" fill="#333"/><rect x="41" y="498.7" width="5.2" height="1.6" fill="#333"/><rect x="44" y="491.7" width="2.2" height="1.6" fill="#333"/><rect x="41" y="484.7" width="5.2" height="1.6" fill="#333"/><rect x="44" y="477.2" width="2.2" height="1.6" fill="#333"/><rect x="41" y="470.2" width="5.2" height="1.6" fill="#333"/><rect x="44" y="463.2" width="2.2" height="1.6" fill="#333"/><rect x="41" y="455.7" width="5.2" height="1.6" fill="#333"/><rect x="44" y="448.7" width="2.2" height="1.6" fill="#333"/><rect x="33.6" y="441.7" width="12.6" height="1.8" fill="#444"/><rect x="44" y="434.2" width="2.2" height="1.6" fill="#333"/><rect x="41" y="427.2" width="5.2" height="1.6" fill="#333"/><rect x="44" y="420.2" width="2.2" height="1.6" fill="#333"/><rect x="41" y="412.7" width="5.2" height="1.6" fill="#333"/><rect x="44" y="405.7" width="2.2" height="1.6" fill="#333"/><rect x="41" y="398.2" width="5.2" height="1.6" fill="#333"/><rect x="44" y="391.2" width="2.2" height="1.6" fill="#333"/><rect x="41" y="384.2" width="5.2" height="1.6" fill="#333"/><rect x="44" y="376.7" width="2.2" height="1.6" fill="#333"/><rect x="33.6" y="369.7" width="12.6" height="1.8" fill="#444"/><rect x="44" y="362.7" width="2.2" height="1.6" fill="#333"/><rect x="41" y="355.2" width="5.2" height="1.6" fill="#333"/><rect x="44" y="348.2" width="2.2" height="1.6" fill="#333"/><rect x="41" y="341.2" width="5.2" height="1.6" fill="#333"/><rect x="44" y="333.7" width="2.2" height="1.6" fill="#333"/><rect x="41" y="326.7" width="5.2" height="1.6" fill="#333"/><rect x="44" y="319.7" width="2.2" height="1.6" fill="#333"/><rect x="41" y="312.2" width="5.2" height="1.6" fill="#333"/><rect x="44" y="305.2" width="2.2" height="1.6" fill="#333"/><rect x="33.6" y="298.2" width="12.6" height="1.8" fill="#444"/><rect x="44" y="290.7" width="2.2" height="1.6" fill="#333"/><rect x="41" y="283.7" width="5.2" height="1.6" fill="#333"/><rect x="44" y="276.7" width="2.2" height="1.6" fill="#333"/><rect x="41" y="269.2" width="5.2" height="1.6" fill="#333"/><rect x="44" y="262.2" width="2.2" height="1.6" fill="#333"/><rect x="41" y="254.7" width="5.2" height="1.6" fill="#333"/><rect x="44" y="247.7" width="2.2" height="1.6" fill="#333"/><rect x="41" y="240.7" width="5.2" height="1.6" fill="#333"/><rect x="44" y="233.2" width="2.2" height="1.6" fill="#333"/><rect x="33.6" y="226.2" width="12.6" height="1.8" fill="#444"/><rect x="44" y="219.2" width="2.2" height="1.6" fill="#333"/><rect x="41" y="211.7" width="5.2" height="1.6" fill="#333"/><rect x="44" y="204.7" width="2.2" height="1.6" fill="#333"/><rect x="41" y="197.7" width="5.2" height="1.6" fill="#333"/><rect x="44" y="190.2" width="2.2" height="1.6" fill="#333"/><rect x="41" y="183.2" width="5.2" height="1.6" fill="#333"/><rect x="44" y="176.2" width="2.2" height="1.6" fill="#333"/><rect x="41" y="168.7" width="5.2" height="1.6" fill="#333"/><rect x="44" y="161.7" width="2.2" height="1.6" fill="#333"/><rect x="33.6" y="154.7" width="12.6" height="1.8" fill="#444"/><rect x="44" y="147.2" width="2.2" height="1.6" fill="#333"/><rect x="41" y="140.2" width="5.2" height="1.6" fill="#333"/><rect x="44" y="133.2" width="2.2" height="1.6" fill="#333"/><rect x="41" y="125.7" width="5.2" height="1.6" fill="#333"/><rect x="44" y="118.7" width="2.2" height="1.6" fill="#333"/><rect x="41" y="111.2" width="5.2" height="1.6" fill="#333"/><rect x="44" y="104.2" width="2.2" height="1.6" fill="#333"/><rect x="41" y="97.2" width="5.2" height="1.6" fill="#333"/><rect x="44" y="89.7" width="2.2" height="1.6" fill="#333"/><rect x="33.6" y="82.7" width="12.6" height="1.8" fill="#444"/><rect x="44" y="75.7" width="2.2" height="1.6" fill="#333"/></svg>
<div class="t" style="left:55.5px;top:57.4px;font-size:7.6px;line-height:9px;height:9px;color:#222;letter-spacing:-0.45px">0</div>
<div class="t" style="left:126.5px;top:57.4px;font-size:7.6px;line-height:9px;height:9px;color:#222;letter-spacing:-0.45px">50</div>
<div class="t" style="left:198.5px;top:57.4px;font-size:7.6px;line-height:9px;height:9px;color:#222;letter-spacing:-0.45px">100</div>
<div class="t" style="left:270.5px;top:57.4px;font-size:7.6px;line-height:9px;height:9px;color:#222;letter-spacing:-0.45px">150</div>
<div class="t" style="left:342.5px;top:57.4px;font-size:7.6px;line-height:9px;height:9px;color:#222;letter-spacing:-0.45px">200</div>
<div class="t" style="left:413.5px;top:57.4px;font-size:7.6px;line-height:9px;height:9px;color:#222;letter-spacing:-0.45px">250</div>
<div class="t" style="left:485.5px;top:57.4px;font-size:7.6px;line-height:9px;height:9px;color:#222;letter-spacing:-0.45px">300</div>
<div class="t" style="left:557.5px;top:57.4px;font-size:7.6px;line-height:9px;height:9px;color:#222;letter-spacing:-0.45px">350</div>
<div class="t" style="left:629.5px;top:57.4px;font-size:7.6px;line-height:9px;height:9px;color:#222;letter-spacing:-0.45px">400</div>
<div class="t" style="left:700.5px;top:57.4px;font-size:7.6px;line-height:9px;height:9px;color:#222;letter-spacing:-0.45px">450</div>
<div class="t" style="left:772.5px;top:57.4px;font-size:7.6px;line-height:9px;height:9px;color:#222;letter-spacing:-0.45px">500</div>
<div class="t" style="left:844.5px;top:57.4px;font-size:7.6px;line-height:9px;height:9px;color:#222;letter-spacing:-0.45px">550</div>
<div class="t" style="left:916.5px;top:57.4px;font-size:7.6px;line-height:9px;height:9px;color:#222;letter-spacing:-0.45px">60</div>
<div class="t" style="left:39.6px;top:590px;font-size:8.4px;line-height:9px;height:9px;color:#222;letter-spacing:2.3px;transform-origin:0 0;transform:rotate(90deg)">0</div>
<div class="t" style="left:39.6px;top:518px;font-size:8.4px;line-height:9px;height:9px;color:#222;letter-spacing:2.3px;transform-origin:0 0;transform:rotate(90deg)">50</div>
<div class="t" style="left:39.6px;top:446px;font-size:8.4px;line-height:9px;height:9px;color:#222;letter-spacing:2.3px;transform-origin:0 0;transform:rotate(90deg)">100</div>
<div class="t" style="left:39.6px;top:375px;font-size:8.4px;line-height:9px;height:9px;color:#222;letter-spacing:2.3px;transform-origin:0 0;transform:rotate(90deg)">150</div>
<div class="t" style="left:39.6px;top:303px;font-size:8.4px;line-height:9px;height:9px;color:#222;letter-spacing:2.3px;transform-origin:0 0;transform:rotate(90deg)">200</div>
<div class="t" style="left:39.6px;top:231px;font-size:8.4px;line-height:9px;height:9px;color:#222;letter-spacing:2.3px;transform-origin:0 0;transform:rotate(90deg)">250</div>
<div class="t" style="left:39.6px;top:159px;font-size:8.4px;line-height:9px;height:9px;color:#222;letter-spacing:2.3px;transform-origin:0 0;transform:rotate(90deg)">300</div>
<div class="t" style="left:39.6px;top:88px;font-size:8.4px;line-height:9px;height:9px;color:#222;letter-spacing:2.3px;transform-origin:0 0;transform:rotate(90deg)">350</div>
<svg class="a" style="left:390px;top:64px" width="16" height="10"><path d="M2.8 2.8 L11.2 2.8 L7 8.8 Z" fill="#111"/></svg>
<svg class="a" style="left:39px;top:73px" width="9" height="10"><path d="M1 2 L8 3.5 L1.5 9 Z" fill="#111"/></svg>
<svg class="a" style="left:0;top:0" width="1280" height="720"><defs>
<linearGradient id="bg1" gradientUnits="userSpaceOnUse" x1="440" y1="205" x2="555" y2="360"><stop offset="0" stop-color="#dc4444"/><stop offset="0.45" stop-color="#cc3131"/><stop offset="1" stop-color="#ad1b1b"/></linearGradient>
<radialGradient id="hl1" gradientUnits="userSpaceOnUse" cx="458" cy="220" r="72"><stop offset="0" stop-color="#fff" stop-opacity="0.62"/><stop offset="0.45" stop-color="#fff" stop-opacity="0.4"/><stop offset="1" stop-color="#fff" stop-opacity="0.04"/></radialGradient>
</defs><rect x="53.5" y="155.5" width="861" height="430.5" fill="none" stroke="#7a7a7a" stroke-width="1.2"/><path d="M495.5 380 C488 385 482 392 482 402 C482 425 517 440 517 470 C517 492 497 505 494 526" fill="none" stroke="#2e2e2e" stroke-width="1.9"/><path d="M490.5 373.5 L502 373.5 L499 381 L493.5 381 Z" fill="#c12a2a" stroke="#2a0808" stroke-width="1"/><path d="M496 194 C536.3 194 569.2 226.7 569.2 267 C569.2 310 536 374.5 497 375.6 C458 374.5 422.8 310 422.8 267 C422.8 226.7 455.7 194 496 194 Z" fill="url(#bg1)" stroke="#260707" stroke-width="1.7"/><path d="M504.5 206.4 A62 62 0 0 0 437.7 288.4 A77 77 0 0 1 504.5 206.4 Z" fill="url(#hl1)"/><rect x="422.2" y="194" width="148.4" height="181.4" fill="none" stroke-width="1.4" stroke-dasharray="3.9 3.6" stroke="#6e6e6e"/><rect x="436.4" y="207" width="74.8" height="90.8" fill="none" stroke-width="1.4" stroke-dasharray="3.9 3.6" stroke="#a08c8c" stroke-opacity="0.85"/><rect x="488.6" y="353.4" width="15" height="27" fill="none" stroke-width="1.4" stroke-dasharray="3.9 3.6" stroke="#907878" stroke-opacity="0.85"/><rect x="481.8" y="379.4" width="35.8" height="147.4" fill="none" stroke-width="1.4" stroke-dasharray="3.9 3.6" stroke="#6e6e6e"/><path d="M-7.2 0 L-2.6000000000000005 -4.5 L-2.6000000000000005 -1.6 L2.6000000000000005 -1.6 L2.6000000000000005 -4.5 L7.2 0 L2.6000000000000005 4.5 L2.6000000000000005 1.6 L-2.6000000000000005 1.6 L-2.6000000000000005 4.5 Z" transform="translate(415.8 187.6) rotate(45)" fill="#000"/><path d="M-6.2 0 L-1.6000000000000005 -4.5 L-1.6000000000000005 -1.6 L1.6000000000000005 -1.6 L1.6000000000000005 -4.5 L6.2 0 L1.6000000000000005 4.5 L1.6000000000000005 1.6 L-1.6000000000000005 1.6 L-1.6000000000000005 4.5 Z" transform="translate(496.8 187.4) rotate(90)" fill="#000"/><path d="M-7.2 0 L-2.6000000000000005 -4.5 L-2.6000000000000005 -1.6 L2.6000000000000005 -1.6 L2.6000000000000005 -4.5 L7.2 0 L2.6000000000000005 4.5 L2.6000000000000005 1.6 L-2.6000000000000005 1.6 L-2.6000000000000005 4.5 Z" transform="translate(575.6 187.6) rotate(-45)" fill="#000"/><path d="M-6.2 0 L-1.6000000000000005 -4.5 L-1.6000000000000005 -1.6 L1.6000000000000005 -1.6 L1.6000000000000005 -4.5 L6.2 0 L1.6000000000000005 4.5 L1.6000000000000005 1.6 L-1.6000000000000005 1.6 L-1.6000000000000005 4.5 Z" transform="translate(415.8 360) rotate(0)" fill="#000"/><path d="M-6.2 0 L-1.6000000000000005 -4.5 L-1.6000000000000005 -1.6 L1.6000000000000005 -1.6 L1.6000000000000005 -4.5 L6.2 0 L1.6000000000000005 4.5 L1.6000000000000005 1.6 L-1.6000000000000005 1.6 L-1.6000000000000005 4.5 Z" transform="translate(575.8 360) rotate(0)" fill="#000"/><path d="M-7.2 0 L-2.6000000000000005 -4.5 L-2.6000000000000005 -1.6 L2.6000000000000005 -1.6 L2.6000000000000005 -4.5 L7.2 0 L2.6000000000000005 4.5 L2.6000000000000005 1.6 L-2.6000000000000005 1.6 L-2.6000000000000005 4.5 Z" transform="translate(415.8 532) rotate(-45)" fill="#000"/><path d="M-6.2 0 L-1.6000000000000005 -4.5 L-1.6000000000000005 -1.6 L1.6000000000000005 -1.6 L1.6000000000000005 -4.5 L6.2 0 L1.6000000000000005 4.5 L1.6000000000000005 1.6 L-1.6000000000000005 1.6 L-1.6000000000000005 4.5 Z" transform="translate(496.8 532.6) rotate(90)" fill="#000"/><path d="M-7.2 0 L-2.6000000000000005 -4.5 L-2.6000000000000005 -1.6 L2.6000000000000005 -1.6 L2.6000000000000005 -4.5 L7.2 0 L2.6000000000000005 4.5 L2.6000000000000005 1.6 L-2.6000000000000005 1.6 L-2.6000000000000005 4.5 Z" transform="translate(575.6 532) rotate(45)" fill="#000"/></svg>
<div class="a" style="left:931px;top:57px;width:292px;height:2px;background:#333"></div>
<div class="a" style="left:933px;top:59px;width:290px;height:20px;background:linear-gradient(#d0d0d0,#d9d9d9);border-bottom:1px solid #c4c4c4"></div><svg class="a" style="left:937px;top:62px" width="16" height="14" viewBox="0 0 16 14" ><g fill="#fff" stroke="#222" stroke-width="1"><path d="M1.5 2 L10 1.5 L13.5 3 L13.5 5.5 L10 6.5 L1.5 6 Z"/><path d="M1.5 5 L10 4.5 L13.5 6 L13.5 8.5 L10 9.5 L1.5 9 Z"/><path d="M1.5 8 L10 7.5 L13.5 9 L13.5 11.5 L10 12.5 L1.5 12 Z"/></g></svg><div class="t" style="left:953.5px;top:61.5px;font-size:12px;letter-spacing:-0.462px;color:#111;">Layers (Shift+Ctrl+L)</div><div class="a" style="left:1187px;top:62px;width:11px;height:11px;border:1px solid #808080;border-radius:2px;background:#e2e2e2"></div><svg class="a" style="left:1187px;top:62px" width="11" height="11" viewBox="0 0 11 11" ><path d="M3.8 3 L8 5.5 L3.8 8 Z" fill="#555"/></svg><div class="a" style="left:1207px;top:62px;width:11px;height:11px;border:1px solid #808080;border-radius:2px;background:#e2e2e2"></div><svg class="a" style="left:1207px;top:62px" width="11" height="11" viewBox="0 0 11 11" ><path d="M3 3 L8 8 M8 3 L3 8" stroke="#555" stroke-width="1.6"/></svg>
<div class="a" style="left:937px;top:84px;width:281px;height:60px;background:#fff;border:1px solid #c2c2c2"></div>
<div class="a" style="left:938px;top:85px;width:279px;height:27px;background:#f0f0f0"></div>
<svg class="a" style="left:943.5px;top:91.2px" width="17.099999999999998" height="13.299999999999999" viewBox="0 0 18 14"><path d="M1 8 C4 3.5 14 3.5 17 8 C14 12.5 4 12.5 1 8 Z" fill="#fff" stroke="#111" stroke-width="1.3"/><circle cx="9" cy="8" r="3.1" fill="#111"/><path d="M3 3.8 L4.6 5.6 M6.2 1.8 L7 4.4 M9.6 1.2 L9.6 4 M13 1.8 L12 4.4 M15.6 3.8 L14 5.6" stroke="#111" stroke-width="1.2" fill="none"/></svg>
<svg class="a" style="left:972px;top:90px" width="12.88" height="14.72" viewBox="0 0 14 16"><path d="M3.5 8 L3.5 4.5 C3.5 1 10 1 10 4.5 L10 5.5" fill="none" stroke="#222" stroke-width="1.5"/><rect x="1.5" y="7" width="11" height="8" rx="1" fill="#f0dc6a" stroke="#333" stroke-width="1"/><rect x="6.2" y="9.5" width="1.8" height="3" fill="#333"/></svg>
<div class="t" style="left:1010.5px;top:91.5px;font-size:12px;letter-spacing:-0.789px;color:#111;">Layer 1</div>
<div class="btn" style="left:938px;top:145px;width:30px;height:24px"></div>
<div class="btnd" style="left:988px;top:145px;width:30px;height:24px"></div>
<div class="btnd" style="left:1037.5px;top:145px;width:30px;height:24px"></div>
<div class="btnd" style="left:1087px;top:145px;width:30px;height:24px"></div>
<div class="btnd" style="left:1137px;top:145px;width:30px;height:24px"></div>
<div class="btn" style="left:1187px;top:145px;width:30px;height:24px"></div>
<svg class="a" style="left:938px;top:145px" width="30" height="24" viewBox="0 0 30 24" ><path d="M13.4 5 L16.8 5 L16.8 10.4 L22 10.4 L22 13.8 L16.8 13.8 L16.8 19 L13.4 19 L13.4 13.8 L8 13.8 L8 10.4 L13.4 10.4 Z" fill="#4a86d0" stroke="#1c4c94" stroke-width="1"/></svg>
<svg class="a" style="left:988px;top:145px" width="30" height="24" viewBox="0 0 30 24" ><rect x="8.6" y="5" width="13" height="3" fill="#9cbc8c" stroke="#7a9c6c" stroke-width="0.9"/><path d="M15 8.6 L21 14 L17.6 14 L17.6 19.4 L12.4 19.4 L12.4 14 L9 14 Z" fill="#9cbc8c" stroke="#7a9c6c" stroke-width="0.9"/></svg>
<svg class="a" style="left:1037.5px;top:145px" width="30" height="24" viewBox="0 0 30 24" ><path d="M15 5.6 L21.4 12 L17.8 12 L17.8 18.4 L12.2 18.4 L12.2 12 L8.6 12 Z" fill="#9cbc8c" stroke="#7a9c6c" stroke-width="0.9"/></svg>
<svg class="a" style="left:1087px;top:145px" width="30" height="24" viewBox="0 0 30 24" ><path d="M15 18.4 L21.4 12 L17.8 12 L17.8 5.6 L12.2 5.6 L12.2 12 L8.6 12 Z" fill="#9cbc8c" stroke="#7a9c6c" stroke-width="0.9"/></svg>
<svg class="a" style="left:1137px;top:145px" width="30" height="24" viewBox="0 0 30 24" ><rect x="8.6" y="16.4" width="13" height="3" fill="#9cbc8c" stroke="#7a9c6c" stroke-width="0.9"/><path d="M15 15.8 L21 10.4 L17.6 10.4 L17.6 4.8 L12.4 4.8 L12.4 10.4 L9 10.4 Z" fill="#9cbc8c" stroke="#7a9c6c" stroke-width="0.9"/></svg>
<svg class="a" style="left:1187px;top:145px" width="30" height="24" viewBox="0 0 30 24" ><rect x="8.6" y="10" width="13" height="4" rx="0.8" fill="#4a86d0" stroke="#1c4c94" stroke-width="1"/></svg>
<div class="t" style="left:941px;top:175.8px;font-size:12px;letter-spacing:-0.398px;"><u>B</u>lend mode:</div>
<div class="inp" style="left:1015.5px;top:172px;width:187px;height:22px"></div>
<div class="t" style="left:1020px;top:175.8px;font-size:12px;letter-spacing:-0.195px;">Normal</div>
<div class="btn" style="left:1201px;top:172px;width:17px;height:22px"></div>
<svg class="a" style="left:1204.5px;top:179.5px" width="10" height="8" viewBox="0 0 10 8" ><path d="M1 1.5 L9 1.5 L5 6.5 Z" fill="#111"/></svg>
<div class="t" style="left:941px;top:199px;font-size:12px;letter-spacing:-0.313px;">Opacity, %</div>
<div class="a" style="left:942px;top:222.5px;width:218px;height:2px;background:#c6c6c6;border-bottom:1px solid #f8f8f8"></div><div class="a" style="left:1154.5px;top:214.5px;width:10px;height:16px;border:1px solid #8a8a8a;border-radius:2px;background:linear-gradient(90deg,#f4f4f4,#dcdcdc 55%,#cfcfcf)"></div>
<div class="inp" style="left:1171px;top:213.5px;width:36.5px;height:20px"></div><div class="t" style="left:1175px;top:216.5px;font-size:12px;letter-spacing:-0.806px;">100.0</div><div class="spin" style="left:1207.5px;top:213.5px;height:20px"></div><svg class="a" style="left:1207.5px;top:213.5px" width="9" height="20"><path d="M2.5 7.5 L6.5 7.5 L4.5 4.5 Z" fill="#7f8bb0"/><path d="M2.5 12.5 L6.5 12.5 L4.5 15.5 Z" fill="#7f8bb0"/><rect x="1" y="10" width="7" height="0.6" fill="#c8cbd6"/></svg>
<div class="a" style="left:933px;top:241px;width:290px;height:4.5px;background:#f8f8f8"></div>
<div class="a" style="left:933px;top:245.5px;width:290px;height:20.5px;background:linear-gradient(#d0d0d0,#d9d9d9);border-bottom:1px solid #c4c4c4"></div><svg class="a" style="left:937px;top:247px" width="16" height="17" viewBox="0 0 16 17" ><path d="M1.4 2 L13 2 L6 9.6 L1.4 13.4 Z" fill="#fff" stroke="#111" stroke-width="1.5" stroke-linejoin="round"/><path d="M14.8 2.4 L7 10.4 L1.6 15.6 L9 12.6 L15.4 5 Z" fill="#111"/><path d="M12.8 4.2 L14.6 6" stroke="#f4c430" stroke-width="2"/></svg><div class="t" style="left:953.5px;top:248.6px;font-size:12px;letter-spacing:-0.385px;color:#111;">Fill and Stroke (Shift+Ctrl+F)</div><div class="a" style="left:1187px;top:250px;width:11px;height:11px;border:1px solid #808080;border-radius:2px;background:#e2e2e2"></div><svg class="a" style="left:1187px;top:250px" width="11" height="11" viewBox="0 0 11 11" ><path d="M3.8 3 L8 5.5 L3.8 8 Z" fill="#555"/></svg><div class="a" style="left:1207px;top:250px;width:11px;height:11px;border:1px solid #808080;border-radius:2px;background:#e2e2e2"></div><svg class="a" style="left:1207px;top:250px" width="11" height="11" viewBox="0 0 11 11" ><path d="M3 3 L8 8 M8 3 L3 8" stroke="#555" stroke-width="1.6"/></svg>
<div class="a" style="left:939.5px;top:273.5px;width:36px;height:22px;border:1px solid #c8c8c8;border-bottom:none;background:#ececec;border-radius:2px 2px 0 0"></div>
<div class="a" style="left:1062px;top:273.5px;width:80px;height:22px;border:1px solid #c8c8c8;border-bottom:none;background:#ececec;border-radius:2px 2px 0 0"></div>
<div class="a" style="left:937px;top:294.5px;width:281px;height:263px;background:#fff;border:1px solid #c2c2c2"></div>
<div class="a" style="left:976px;top:271px;width:87px;height:25px;border:1px solid #c2c2c2;border-bottom:none;background:#fff;border-radius:2px 2px 0 0"></div>
<svg class="a" style="left:942px;top:277px" width="14" height="14" viewBox="0 0 14 14" ><defs><linearGradient id="tf" x1="0" y1="0" x2="1" y2="1"><stop offset="0" stop-color="#8eb0d4"/><stop offset="1" stop-color="#eef3f8"/></linearGradient></defs><rect x="0" y="0" width="14" height="14" fill="url(#tf)"/></svg>
<div class="t" style="left:957.5px;top:278px;font-size:12px;letter-spacing:-0.332px;">Fill</div>
<svg class="a" style="left:981px;top:276px" width="14" height="14" viewBox="0 0 14 14" ><rect x="1" y="1" width="12" height="12" fill="#fff" stroke="#666" stroke-width="1"/><path d="M2 13 L13 13 L13 2" fill="none" stroke="#bbb" stroke-width="1"/></svg>
<div class="t" style="left:996.5px;top:277px;font-size:12px;letter-spacing:-0.420px;">Stroke <u>p</u>aint</div>
<svg class="a" style="left:1063px;top:276px" width="17" height="14" viewBox="0 0 17 14" ><path d="M1 3 L12 3" stroke="#111" stroke-width="1.2"/><path d="M15.6 3 L11.4 0.6 L11.4 5.4 Z" fill="#111"/><path d="M1 8 L15 8" stroke="#111" stroke-width="1.2" stroke-dasharray="1.6 1"/><path d="M1 12.4 L15 12.4" stroke="#111" stroke-width="1.6"/></svg>
<div class="t" style="left:1080px;top:278px;font-size:12px;letter-spacing:-0.474px;">Stroke st<u>y</u>le</div>
<svg class="a" style="left:951px;top:310px" width="16" height="14" viewBox="0 0 16 14" ><path d="M3.4 2.6 L12.2 11.4 M12.2 2.6 L3.4 11.4" stroke="#0a0a0a" stroke-width="2.2"/></svg>
<svg class="a" style="left:976.5px;top:306.5px" width="21" height="20" viewBox="0 0 21 20" ><rect x="1" y="1.3" width="18.6" height="17.6" fill="#8eb0d4" stroke="#4c5870" stroke-width="1.3"/></svg>
<svg class="a" style="left:1004.7px;top:306.5px" width="21" height="20" viewBox="0 0 21 20" ><defs><linearGradient id="p2" x1="0" y1="0" x2="1" y2="0"><stop offset="0" stop-color="#9ab8d8"/><stop offset="1" stop-color="#f2f6fa"/></linearGradient></defs><rect x="1" y="1.3" width="18.6" height="17.6" fill="url(#p2)" stroke="#4c5870" stroke-width="1.3"/></svg>
<svg class="a" style="left:1032.8px;top:306.5px" width="21" height="20" viewBox="0 0 21 20" ><defs><radialGradient id="p3"><stop offset="0" stop-color="#f4f8fc"/><stop offset="1" stop-color="#8eb0d4"/></radialGradient></defs><rect x="1" y="1.3" width="18.6" height="17.6" fill="url(#p3)" stroke="#4c5870" stroke-width="1.3"/></svg>
<svg class="a" style="left:1061.3px;top:306.5px" width="21" height="20" viewBox="0 0 21 20" ><rect x="1" y="1.3" width="18.6" height="17.6" fill="#8eb0d4" stroke="#4c5870" stroke-width="1.3"/><g fill="#eef4fa"><path d="M5.6 2.6 L8.6 5.6 L5.6 8.6 L2.6 5.6 Z"/><path d="M14.6 2.6 L17.6 5.6 L14.6 8.6 L11.6 5.6 Z"/><path d="M5.6 11.6 L8.6 14.6 L5.6 17.6 L2.6 14.6 Z"/><path d="M14.6 11.6 L17.6 14.6 L14.6 17.6 L11.6 14.6 Z"/><path d="M10.2 7.2 L13 10 L10.2 12.8 L7.4 10 Z"/></g></svg>
<svg class="a" style="left:1089.5px;top:306.5px" width="21" height="20" viewBox="0 0 21 20" ><rect x="1" y="1.3" width="18.6" height="17.6" fill="#fff" stroke="#4c5870" stroke-width="1.3"/><path d="M3 17.4 L17.8 17.4 L17.8 3.4" fill="none" stroke="#9aa4b4" stroke-width="2"/></svg>
<div class="t" style="left:1122px;top:303px;font-size:22px;letter-spacing:-1.235px;color:#0a0a0a;font-weight:bold;line-height:26px;height:26px">?</div>
<div class="a" style="left:942px;top:342px;width:272px;height:211.5px;border:1px solid #d0d0d0"></div>
<div class="a" style="left:944.5px;top:336px;width:74px;height:12px;background:#fff"></div>
<div class="t" style="left:946px;top:335.5px;font-size:12px;letter-spacing:-0.291px;">Multiple styles</div>
<div class="t" style="left:941.5px;top:561px;font-size:12px;letter-spacing:-0.535px;">B<u>l</u>ur:</div>
<div class="a" style="left:942px;top:584.5px;width:226px;height:2px;background:#c6c6c6;border-bottom:1px solid #f8f8f8"></div><div class="a" style="left:942.5px;top:576.5px;width:10px;height:16px;border:1px solid #8a8a8a;border-radius:2px;background:linear-gradient(90deg,#f4f4f4,#dcdcdc 55%,#cfcfcf)"></div>
<div class="inp" style="left:1171.5px;top:575px;width:36.5px;height:20.5px"></div><div class="t" style="left:1175.5px;top:578.0px;font-size:12px;letter-spacing:-0.894px;">0.0</div><div class="spin" style="left:1208.0px;top:575px;height:20.5px"></div><svg class="a" style="left:1208.0px;top:575px" width="9" height="20.5"><path d="M2.5 7.5 L6.5 7.5 L4.5 4.5 Z" fill="#7f8bb0"/><path d="M2.5 12.5 L6.5 12.5 L4.5 15.5 Z" fill="#7f8bb0"/><rect x="1" y="10.0" width="7" height="0.6" fill="#c8cbd6"/></svg>
<div class="t" style="left:941.5px;top:600px;font-size:12px;letter-spacing:-0.313px;">Opacity, %</div>
<div class="a" style="left:942px;top:624px;width:223px;height:2px;background:#c6c6c6;border-bottom:1px solid #f8f8f8"></div><div class="a" style="left:1127.5px;top:616px;width:10px;height:16px;border:1px solid #8a8a8a;border-radius:2px;background:linear-gradient(90deg,#f4f4f4,#dcdcdc 55%,#cfcfcf)"></div>
<div class="inp" style="left:1171.5px;top:614px;width:36.5px;height:21.5px"></div><div class="t" style="left:1175.5px;top:617.0px;font-size:12px;letter-spacing:-0.839px;">87.5</div><div class="spin" style="left:1208.0px;top:614px;height:21.5px"></div><svg class="a" style="left:1208.0px;top:614px" width="9" height="21.5"><path d="M2.5 7.5 L6.5 7.5 L4.5 4.5 Z" fill="#7f8bb0"/><path d="M2.5 12.5 L6.5 12.5 L4.5 15.5 Z" fill="#7f8bb0"/><rect x="1" y="10.0" width="7" height="0.6" fill="#c8cbd6"/></svg>
<div class="a" style="left:933px;top:641px;width:289px;height:16px;background:#f6f6f6"></div>
<div class="a" style="left:1223px;top:57px;width:3px;height:600px;background:#eceef6"></div>
<div class="a" style="left:1253px;top:57px;width:1px;height:600px;background:#c4c9dc"></div>
<div class="a" style="left:1254px;top:57px;width:1px;height:600px;background:#e0e4f0"></div>
<svg class="a" style="left:1230px;top:62px" width="20" height="22" viewBox="0 0 20 22" ><path d="M3.8 2.4 L11.6 2.4 L15.6 6.2 L15.6 15 L3.8 15 Z" fill="#fbfbf8" stroke="#55585c" stroke-width="1" stroke="#9a9ca4"/><path d="M11.6 2.4 L11.6 6.2 L15.6 6.2" fill="#e8e8e4" stroke="#9a9ca4" stroke-width="0.8"/></svg>
<svg class="a" style="left:1230px;top:86px" width="20" height="22" viewBox="0 0 20 22" ><path d="M2.6 14.6 L2.6 3 L7.4 3 L8.8 4.8 L15.6 4.8 L15.6 14.6 Z" fill="#c4c894" stroke="#8c9060" stroke-width="1"/><path d="M2.6 14.6 L4.4 8.2 L17 8.2 L15.6 14.6 Z" fill="#e0e4b4" stroke="#8c9060" stroke-width="1"/></svg>
<svg class="a" style="left:1230px;top:110px" width="20" height="22" viewBox="0 0 20 22" ><rect x="2.4" y="2" width="14.6" height="14.6" rx="1.4" fill="#3c64b4" stroke="#1c3c84" stroke-width="1"/><rect x="4.4" y="2.6" width="10.6" height="6.4" fill="#f4f4f4"/><rect x="4.4" y="2.6" width="10.6" height="2.6" fill="#e42c2c"/><rect x="6" y="11" width="7.4" height="5" fill="#c4c8d0"/><rect x="7.2" y="12" width="2.2" height="3.4" fill="#2c3c5c"/></svg>
<svg class="a" style="left:1230px;top:134px" width="20" height="22" viewBox="0 0 20 22" ><rect x="5.4" y="2.2" width="8.8" height="7" fill="#fafafa" stroke="#707478" stroke-width="1"/><rect x="2.4" y="8.4" width="15" height="6.2" rx="1.2" fill="#dcdcd8" stroke="#606468" stroke-width="1"/><rect x="4.4" y="12.4" width="11" height="4.2" fill="#f4f4f0" stroke="#606468" stroke-width="0.9"/><path d="M7 4.6 L12.6 4.6 M7 6.6 L12.6 6.6" stroke="#c0c0c0" stroke-width="0.8"/></svg>
<div class="a" style="left:1232px;top:160px;width:15px;height:1px;background:#b4b9cc"></div><div class="a" style="left:1232px;top:161px;width:15px;height:1px;background:#e8ebf5"></div>
<svg class="a" style="left:1230px;top:169px" width="20" height="22" viewBox="0 0 20 22" ><path d="M6.6 3 L13.4 3 L16.8 6.2 L16.8 17.4 L6.6 17.4 Z" fill="#fbfbf8" stroke="#55585c" stroke-width="1" stroke="#222"/><path d="M13.4 3 L13.4 6.2 L16.8 6.2" fill="none" stroke="#222" stroke-width="0.9"/><path d="M1.6 11 L9 11" stroke="#0a0a0a" stroke-width="1.4"/><path d="M12.6 11 L8.4 8.2 L8.4 13.8 Z" fill="#0a0a0a"/></svg>
<svg class="a" style="left:1230px;top:194px" width="20" height="22" viewBox="0 0 20 22" ><path d="M2.6 2.6 L9.4 2.6 L12.8 5.8 L12.8 17 L2.6 17 Z" fill="#fbfbf8" stroke="#55585c" stroke-width="1" stroke="#222"/><path d="M9.4 2.6 L9.4 5.8 L12.8 5.8" fill="none" stroke="#222" stroke-width="0.9"/><path d="M7 10.6 L14 10.6" stroke="#0a0a0a" stroke-width="1.4"/><path d="M17.8 10.6 L13.4 7.8 L13.4 13.4 Z" fill="#0a0a0a"/></svg>
<div class="a" style="left:1232px;top:221px;width:15px;height:1px;background:#b4b9cc"></div><div class="a" style="left:1232px;top:222px;width:15px;height:1px;background:#e8ebf5"></div>
<svg class="a" style="left:1230px;top:231px" width="20" height="22" viewBox="0 0 20 22" ><path d="M2.2 8.4 L9 2.6 L9 5.8 C14.6 5.6 17.4 9 16.6 13 C16 15.6 13.6 16.6 11.6 16 C13.4 14.6 13.4 11.6 9 11.4 L9 14.4 Z" fill="#f4d434" stroke="#c49c14" stroke-width="0.9" stroke-linejoin="round"/></svg>
<svg class="a" style="left:1230px;top:255px" width="20" height="22" viewBox="0 0 20 22" ><g transform="translate(20 0) scale(-1 1)"><path d="M2.2 8.4 L9 2.6 L9 5.8 C14.6 5.6 17.4 9 16.6 13 C16 15.6 13.6 16.6 11.6 16 C13.4 14.6 13.4 11.6 9 11.4 L9 14.4 Z" fill="#84d42c" stroke="#4c9c14" stroke-width="0.9" stroke-linejoin="round"/></g></svg>
<div class="a" style="left:1232px;top:281px;width:15px;height:1px;background:#b4b9cc"></div><div class="a" style="left:1232px;top:282px;width:15px;height:1px;background:#e8ebf5"></div>
<svg class="a" style="left:1230px;top:291px" width="20" height="22" viewBox="0 0 20 22" ><rect x="2.6" y="2.6" width="9.4" height="10.6" fill="#f4f4f4" stroke="#a4a8b0" stroke-width="1"/><path d="M6.4 5.4 L16.4 5.4 L16.4 13.4 L13.6 16.4 L6.4 16.4 Z" fill="#fafafa" stroke="#8c9098" stroke-width="1"/><path d="M8.4 8.4 L14.4 8.4 M8.4 10.6 L14.4 10.6 M8.4 12.8 L12.4 12.8" stroke="#b4b8c0" stroke-width="0.9"/></svg>
<svg class="a" style="left:1230px;top:315px" width="20" height="22" viewBox="0 0 20 22" ><path d="M4.6 2.6 L11.6 11.6 M15.4 2.6 L8.4 11.6" stroke="#9c9ca0" stroke-width="1.6"/><rect x="2.2" y="11" width="6.6" height="5.6" rx="1.6" fill="#c4801c" stroke="#94600c" stroke-width="0.8"/><rect x="11" y="11" width="6.6" height="5.6" rx="1.6" fill="#c4801c" stroke="#94600c" stroke-width="0.8"/><circle cx="5.4" cy="13.8" r="1.2" fill="#e8d4a4"/><circle cx="14.4" cy="13.8" r="1.2" fill="#e8d4a4"/></svg>
<svg class="a" style="left:1230px;top:340px" width="20" height="22" viewBox="0 0 20 22" ><rect x="3" y="2.6" width="13.6" height="14.4" rx="1.4" fill="#b87c1c" stroke="#84540c" stroke-width="1"/><rect x="5.2" y="5" width="9.2" height="10.4" fill="#fafaf4" stroke="#94948c" stroke-width="0.7"/><rect x="7" y="1.6" width="5.6" height="2.6" rx="0.8" fill="#8c8c8c" stroke="#5c5c5c" stroke-width="0.6"/><path d="M7 8 L12.6 8 M7 10.2 L12.6 10.2 M7 12.4 L11 12.4" stroke="#c0c0b8" stroke-width="0.8"/></svg>
<div class="a" style="left:1232px;top:366px;width:15px;height:1px;background:#b4b9cc"></div><div class="a" style="left:1232px;top:367px;width:15px;height:1px;background:#e8ebf5"></div>
<svg class="a" style="left:1230px;top:374px" width="20" height="22" viewBox="0 0 20 22" ><path d="M13.4 14 L17 17.4" stroke="#0a0a0a" stroke-width="2.4" stroke-linecap="round"/><circle cx="9.4" cy="9.6" r="6.9" fill="#f0f4f8" stroke="#34383c" stroke-width="1.3"/><rect x="5.2" y="5.6" width="8.4" height="8" fill="#fff" stroke="#222" stroke-width="1" stroke-dasharray="1.4 1"/></svg>
<svg class="a" style="left:1230px;top:398px" width="20" height="22" viewBox="0 0 20 22" ><path d="M13.4 14 L17 17.4" stroke="#0a0a0a" stroke-width="2.4" stroke-linecap="round"/><circle cx="9.4" cy="9.6" r="6.9" fill="#f0f4f8" stroke="#34383c" stroke-width="1.3"/><rect x="5" y="5" width="5.6" height="5.6" fill="#f4e08c" stroke="#4c442c" stroke-width="0.9"/><rect x="8" y="8.2" width="5.6" height="5.6" fill="#f4d454" stroke="#4c442c" stroke-width="0.9"/></svg>
<svg class="a" style="left:1230px;top:423px" width="20" height="22" viewBox="0 0 20 22" ><path d="M13.4 14 L17 17.4" stroke="#0a0a0a" stroke-width="2.4" stroke-linecap="round"/><circle cx="9.4" cy="9.6" r="6.9" fill="#f0f4f8" stroke="#34383c" stroke-width="1.3"/><rect x="6" y="5.4" width="7" height="8.6" fill="#fff" stroke="#44484c" stroke-width="1"/><path d="M12.4 6.6 L12.4 13.2 L7 13.2" fill="none" stroke="#b4b8bc" stroke-width="1"/></svg>
<div class="a" style="left:1232px;top:450px;width:15px;height:1px;background:#b4b9cc"></div><div class="a" style="left:1232px;top:451px;width:15px;height:1px;background:#e8ebf5"></div>
<svg class="a" style="left:1230px;top:458px" width="20" height="22" viewBox="0 0 20 22" ><rect x="2.6" y="3.4" width="9.6" height="9" fill="#e4ecf4" stroke="#44484c" stroke-width="1.1"/><defs><linearGradient id="dg" x1="0" y1="0" x2="1" y2="1"><stop offset="0" stop-color="#f4f8fc"/><stop offset="1" stop-color="#bcd0e0"/></linearGradient></defs><rect x="6" y="6.8" width="10.6" height="10.4" fill="url(#dg)" stroke="#44484c" stroke-width="1.1"/></svg>
<svg class="a" style="left:1230px;top:483px" width="20" height="22" viewBox="0 0 20 22" ><rect x="2.6" y="3.4" width="9.6" height="9" fill="#e4ecf4" stroke="#44484c" stroke-width="1.1"/><rect x="6" y="6.8" width="10.6" height="10.4" fill="#f0f4f8" stroke="#44484c" stroke-width="1.1"/><path d="M9.6 11 L9.6 9.8 C9.6 7.6 13 7.6 13 9.8 L13 11" fill="none" stroke="#6c5c2c" stroke-width="1"/><rect x="8.4" y="10.8" width="5.8" height="4.6" rx="0.6" fill="#f0cc54" stroke="#84641c" stroke-width="0.8"/></svg>
<svg class="a" style="left:1230px;top:507px" width="20" height="22" viewBox="0 0 20 22" ><rect x="2.6" y="3.4" width="9.6" height="9" fill="#e4ecf4" stroke="#44484c" stroke-width="1.1"/><rect x="6" y="6.8" width="10.6" height="10.4" fill="#f0f4f8" stroke="#44484c" stroke-width="1.1"/><path d="M9.6 11 L9.6 9.4 C9.6 7.4 12.6 7.2 13 9" fill="none" stroke="#3c5c2c" stroke-width="1"/><rect x="8.4" y="10.8" width="5.8" height="4.6" rx="0.6" fill="#a4c464" stroke="#4c6c2c" stroke-width="0.8"/></svg>
<div class="a" style="left:1232px;top:536px;width:15px;height:1px;background:#b4b9cc"></div><div class="a" style="left:1232px;top:537px;width:15px;height:1px;background:#e8ebf5"></div>
<svg class="a" style="left:1230px;top:543px" width="20" height="22" viewBox="0 0 20 22" ><g fill="#0a0a0a"><rect x="2" y="2" width="2" height="2"/><rect x="15" y="2" width="2" height="2"/><rect x="2" y="15.4" width="2" height="2"/><rect x="15" y="15.4" width="2" height="2"/></g><path d="M3.6 3 L15.6 3 M3 3.6 L3 16 M3.6 16.4 L15.6 16.4 M16 3.6 L16 16" stroke="#8c909c" stroke-width="0.7" stroke-dasharray="1 1.4"/><circle cx="11.4" cy="7.6" r="3.8" fill="#dce8f0" stroke="#5c6874" stroke-width="1"/><rect x="4.6" y="8.8" width="8" height="5.8" fill="#c4d4dc" stroke="#5c6874" stroke-width="1"/></svg>
<svg class="a" style="left:1230px;top:568px" width="20" height="22" viewBox="0 0 20 22" ><g fill="#0a0a0a"><rect x="2" y="2" width="2" height="2"/><rect x="15" y="2" width="2" height="2"/><rect x="2" y="15.4" width="2" height="2"/><rect x="15" y="15.4" width="2" height="2"/><rect x="8.4" y="2" width="2" height="2"/><rect x="15" y="8.6" width="2" height="2"/><rect x="8.4" y="15.4" width="2" height="2"/><rect x="2" y="8.6" width="2" height="2"/></g><circle cx="11.6" cy="7.6" r="3.8" fill="#dce8f0" stroke="#5c6874" stroke-width="1"/><rect x="4.4" y="9.2" width="8" height="5.8" fill="#f0c844" stroke="#7c5c14" stroke-width="1"/><rect x="6" y="11" width="1.6" height="1.6" fill="#a01c1c"/></svg>
<div class="a" style="left:1232px;top:596px;width:15px;height:1px;background:#b4b9cc"></div><div class="a" style="left:1232px;top:597px;width:15px;height:1px;background:#e8ebf5"></div>
<svg class="a" style="left:1230px;top:604px" width="20" height="22" viewBox="0 0 20 22" ><path d="M2.6 3 L16 3 L9 17 L2.6 17 Z" fill="#fafafa" stroke="#0a0a0a" stroke-width="1.6"/><path d="M17.4 4.6 L9.6 12.6 L4 17.4 L10.6 15 L18 7 Z" fill="#0a0a0a"/><path d="M14.4 6.2 L16.4 8" stroke="#f4c42c" stroke-width="2.2"/></svg>
<div class="t" style="left:1236.5px;top:636.5px;font-size:14px;color:#8a8fb4;letter-spacing:-1px">»</div>
<div class="tog" style="left:1256px;top:59.5px;width:23px;height:22px"></div>
<svg class="a" style="left:1256px;top:59px" width="24" height="24" viewBox="0 0 24 24" ><path d="M8 7 L16 15" stroke="#0a0a0a" stroke-width="1.6"/><path d="M16.8 15.8 L12 14.4 L15.4 11 Z" fill="#0a0a0a"/><path d="M7 3.2 L9.8 6 L7 8.8 L4.2 6 Z" fill="#b4b8f4" stroke="#2c2cd4" stroke-width="1.2"/><path d="M17.2 13.4 L20 16.2 L17.2 19 L14.4 16.2 Z" fill="#b4e4b4" stroke="#2c943c" stroke-width="1.2"/></svg>
<div class="a" style="left:1259px;top:87px;width:18px;height:1px;background:#b4b9cc"></div><div class="a" style="left:1259px;top:88px;width:18px;height:1px;background:#e8ebf5"></div>
<svg class="a" style="left:1256px;top:90px" width="24" height="24" viewBox="0 0 24 24" ><path d="M7.4 7.8 L10.6 11.2 L7.4 14.6 L4.2 11.2 Z" fill="#3c3cf0" stroke="#2424c4" stroke-width="0.8"/><path d="M11 11.2 L19.6 11.2" stroke="#6c7084" stroke-width="1.6" stroke-dasharray="1.4 1"/><path d="M7.4 15 L7.4 22.6" stroke="#3c3cc4" stroke-width="1.4" stroke-dasharray="1.4 1"/></svg>
<svg class="a" style="left:1256px;top:118px" width="24" height="24" viewBox="0 0 24 24" ><path d="M5 17 L16.4 17" stroke="#9ca0b0" stroke-width="1.3" stroke-dasharray="1.2 1"/><path d="M17 5 L17 18" stroke="#9ca0b0" stroke-width="1.3" stroke-dasharray="1.2 1"/></svg>
<svg class="a" style="left:1256px;top:143px" width="24" height="24" viewBox="0 0 24 24" ><path d="M5 16.6 L14 16.6" stroke="#9ca0b0" stroke-width="1.3" stroke-dasharray="1.2 1"/><path d="M17 5 L17 14" stroke="#9ca0b0" stroke-width="1.3" stroke-dasharray="1.2 1"/><path d="M17 13.4 L20.2 16.6 L17 19.8 L13.8 16.6 Z" fill="#8c909c"/></svg>
<svg class="a" style="left:1256px;top:167px" width="24" height="24" viewBox="0 0 24 24" ><path d="M5 16 L16 16" stroke="#9ca0b0" stroke-width="1.3" stroke-dasharray="1.2 1"/><path d="M17 12 L17 17" stroke="#9ca0b0" stroke-width="1.3" stroke-dasharray="1.2 1"/><path d="M17 5.6 L20 9 L17 12.4 L14 9 Z" fill="#8c909c"/></svg>
<svg class="a" style="left:1256px;top:191px" width="24" height="24" viewBox="0 0 24 24" ><path d="M5 16 L15.4 16" stroke="#9ca0b0" stroke-width="1.3" stroke-dasharray="1.2 1"/><path d="M16.6 5 L16.6 17" stroke="#9ca0b0" stroke-width="1.3" stroke-dasharray="1.2 1"/><circle cx="7.6" cy="9.4" r="1.7" fill="#a4c4a4" stroke="#6c8c74" stroke-width="0.8"/></svg>
<div class="a" style="left:1259px;top:221px;width:18px;height:1px;background:#b4b9cc"></div><div class="a" style="left:1259px;top:222px;width:18px;height:1px;background:#e8ebf5"></div>
<div class="tog" style="left:1256px;top:228.5px;width:23px;height:22px"></div>
<svg class="a" style="left:1256px;top:228px" width="24" height="24" viewBox="0 0 24 24" ><path d="M3.6 13.6 C5.6 7 9 4.6 11.6 5.6 M7 7.6 C8 13.6 13 17.6 19.6 18.6" fill="none" stroke="#44485c" stroke-width="1.2"/><path d="M11.8 2.4 L14.8 5.4 L11.8 8.4 L8.8 5.4 Z" fill="#3c3cf0" stroke="#1c1cc4" stroke-width="0.8"/></svg>
<svg class="a" style="left:1256px;top:254px" width="24" height="24" viewBox="0 0 24 24" ><path d="M3 4.6 C10 5.6 13 9 13.4 14.4 C13.6 17 13 18.6 12 19.6" fill="none" stroke="#3c9c3c" stroke-width="1.5"/><path d="M12.4 20.4 C15 17 18 13.6 19.6 12" fill="none" stroke="#3c9c3c" stroke-width="1.3"/><path d="M9.6 15.6 L13 20.6 L16.4 15.6" fill="none" stroke="#3c9c3c" stroke-width="1.2"/></svg>
<svg class="a" style="left:1256px;top:278px" width="24" height="24" viewBox="0 0 24 24" ><path d="M4 17 L20 3.4" stroke="#6c7078" stroke-width="1.2"/><path d="M5 8.6 C10 12 15 10.6 20 8.6" fill="none" stroke="#8c909c" stroke-width="1.1"/><path d="M8.6 11.6 L14.6 8.6 M9.6 8.2 L13.6 12" stroke="#54585c" stroke-width="1.2"/></svg>
<svg class="a" style="left:1256px;top:303px" width="24" height="24" viewBox="0 0 24 24" ><path d="M4 3.6 C9 5 13 8.6 12.6 13.6" fill="none" stroke="#5c6070" stroke-width="1.2"/><path d="M18.6 9.6 C19.6 13.6 17 15.6 14.6 14.6" fill="none" stroke="#5c6070" stroke-width="1.2"/><path d="M12 11.6 L15.2 14.8 L12 18 L8.8 14.8 Z" fill="#8cd48c" stroke="#2c8c3c" stroke-width="1.1"/></svg>
<svg class="a" style="left:1256px;top:327px" width="24" height="24" viewBox="0 0 24 24" ><path d="M3.6 6 L9 7.6" stroke="#2c8c3c" stroke-width="1.2"/><path d="M12.6 8 C13.6 13 15 17.6 16.4 17 C18 16 19 14 19.6 11.6" fill="none" stroke="#5c6070" stroke-width="1.2"/><rect x="8.6" y="4.6" width="5.4" height="5.4" fill="#8cd48c" stroke="#2c8c3c" stroke-width="1.1"/><path d="M5 4 L6.6 8.6" stroke="#2c8c3c" stroke-width="1"/></svg>
<svg class="a" style="left:1256px;top:350px" width="24" height="24" viewBox="0 0 24 24" ><path d="M4.6 18.6 L19.6 4.6" stroke="#8c909c" stroke-width="0.9"/><path d="M4 14.6 L9 19.6 M9 14.6 L4 19.6 M4 17 L9.4 17" stroke="#e02c4c" stroke-width="1.3"/><path d="M14 4.6 L19.4 9.6 M19.4 4.6 L14 9.6 M14 7.2 L19.6 7.2" stroke="#e02c4c" stroke-width="1.3"/><circle cx="11.6" cy="12" r="2" fill="#4cb45c" stroke="#2c8c3c" stroke-width="0.7"/></svg>
<svg class="a" style="left:1256px;top:372px" width="24" height="24" viewBox="0 0 24 24" ><path d="M5 18.6 L17.6 18.6 L17.6 6" fill="none" stroke="#8c909c" stroke-width="1.1"/><circle cx="9" cy="11.6" r="1.8" fill="#4cb45c" stroke="#2c8c3c" stroke-width="0.8"/></svg>
<svg class="a" style="left:1256px;top:398px" width="24" height="24" viewBox="0 0 24 24" ><path d="M5 11 L12 11 M8.6 7.4 L8.6 14.6" stroke="#2c2c34" stroke-width="1.4"/><path d="M4.6 17.4 L15.4 17.4" stroke="#5c6070" stroke-width="1.3" stroke-dasharray="1.2 1"/><path d="M16.6 6.6 L16.6 18" stroke="#5c6070" stroke-width="1.3" stroke-dasharray="1.2 1"/></svg>
<div class="a" style="left:1259px;top:428px;width:18px;height:1px;background:#b4b9cc"></div><div class="a" style="left:1259px;top:429px;width:18px;height:1px;background:#e8ebf5"></div>
<svg class="a" style="left:1256px;top:436px" width="24" height="24" viewBox="0 0 24 24" ><defs><linearGradient id="pbg" x1="0" y1="0" x2="1" y2="1"><stop offset="0" stop-color="#fff"/><stop offset="1" stop-color="#d0d0d0"/></linearGradient></defs><rect x="6" y="3.6" width="10.4" height="12.6" fill="url(#pbg)" stroke="#74787c" stroke-width="1"/><path d="M7 16.8 L17 16.8 L17 4.6" fill="none" stroke="#5c5c5c" stroke-width="1"/></svg>
<div class="tog" style="left:1256px;top:459.5px;width:23px;height:23px"></div>
<svg class="a" style="left:1256px;top:459px" width="24" height="24" viewBox="0 0 24 24" ><g stroke="#2c2cf0" stroke-width="1.5"><path d="M6.2 4.4 L6.2 18.6"/><path d="M9.9 4.4 L9.9 18.6"/><path d="M13.600000000000001 4.4 L13.600000000000001 18.6"/><path d="M17.3 4.4 L17.3 18.6"/><path d="M4.6 6.0 L19 6.0"/><path d="M4.6 9.6 L19 9.6"/><path d="M4.6 13.2 L19 13.2"/><path d="M4.6 16.8 L19 16.8"/></g></svg>
<div class="tog" style="left:1256px;top:484.5px;width:23px;height:23px"></div>
<svg class="a" style="left:1256px;top:484px" width="24" height="24" viewBox="0 0 24 24" ><path d="M7 4.6 L7 18.4 M17.6 4.6 L17.6 18.4 M9.6 18.4 L15.4 4.6" stroke="#3c3ce4" stroke-width="1.5"/></svg>
<div class="a" style="left:0;top:657px;width:1280px;height:2px;background:#f0f0f0"></div>
<div class="a" style="left:0;top:657.5px;width:1266px;height:1.5px;background:#1e1e1e"></div>
<div class="a" style="left:0;top:659px;width:1280px;height:18px;background:#f0f0f0"></div>
<svg class="a" style="left:0;top:659px" width="1280" height="18" shape-rendering="crispEdges"><rect x="0" y="0" width="18" height="18" fill="#fff"/><rect x="18" y="0" width="18" height="18" fill="#000000"/><rect x="36" y="0" width="18" height="18" fill="#1a1a1a"/><rect x="54" y="0" width="18" height="18" fill="#333333"/><rect x="72" y="0" width="17" height="18" fill="#4d4d4d"/><rect x="89" y="0" width="18" height="18" fill="#666666"/><rect x="107" y="0" width="18" height="18" fill="#808080"/><rect x="125" y="0" width="18" height="18" fill="#999999"/><rect x="143" y="0" width="18" height="18" fill="#b3b3b3"/><rect x="161" y="0" width="18" height="18" fill="#cccccc"/><rect x="179" y="0" width="17" height="18" fill="#e6e6e6"/><rect x="196" y="0" width="18" height="18" fill="#ececec"/><rect x="214" y="0" width="18" height="18" fill="#f2f2f2"/><rect x="232" y="0" width="18" height="18" fill="#f9f9f9"/><rect x="250" y="0" width="18" height="18" fill="#ffffff"/><rect x="268" y="0" width="18" height="18" fill="#800000"/><rect x="286" y="0" width="18" height="18" fill="#ff0000"/><rect x="304" y="0" width="17" height="18" fill="#808000"/><rect x="321" y="0" width="18" height="18" fill="#ffff00"/><rect x="339" y="0" width="18" height="18" fill="#008000"/><rect x="357" y="0" width="18" height="18" fill="#00ff00"/><rect x="375" y="0" width="18" height="18" fill="#008080"/><rect x="393" y="0" width="18" height="18" fill="#00ffff"/><rect x="411" y="0" width="18" height="18" fill="#000080"/><rect x="429" y="0" width="17" height="18" fill="#0000ff"/><rect x="446" y="0" width="18" height="18" fill="#800080"/><rect x="464" y="0" width="18" height="18" fill="#ff00ff"/><rect x="482" y="0" width="18" height="18" fill="#2b0000"/><rect x="500" y="0" width="18" height="18" fill="#550000"/><rect x="518" y="0" width="18" height="18" fill="#800000"/><rect x="536" y="0" width="18" height="18" fill="#aa0000"/><rect x="554" y="0" width="17" height="18" fill="#d40000"/><rect x="571" y="0" width="18" height="18" fill="#ff0000"/><rect x="589" y="0" width="18" height="18" fill="#ff2a2a"/><rect x="607" y="0" width="18" height="18" fill="#ff5555"/><rect x="625" y="0" width="18" height="18" fill="#ff8080"/><rect x="643" y="0" width="18" height="18" fill="#ffaaaa"/><rect x="661" y="0" width="17" height="18" fill="#ffd5d5"/><rect x="678" y="0" width="18" height="18" fill="#280b0b"/><rect x="696" y="0" width="18" height="18" fill="#501616"/><rect x="714" y="0" width="18" height="18" fill="#782121"/><rect x="732" y="0" width="18" height="18" fill="#a02c2c"/><rect x="750" y="0" width="18" height="18" fill="#c83737"/><rect x="768" y="0" width="18" height="18" fill="#d35f5f"/><rect x="786" y="0" width="17" height="18" fill="#de8787"/><rect x="803" y="0" width="18" height="18" fill="#e9afaf"/><rect x="821" y="0" width="18" height="18" fill="#f4d7d7"/><rect x="839" y="0" width="18" height="18" fill="#241c1c"/><rect x="857" y="0" width="18" height="18" fill="#483737"/><rect x="875" y="0" width="18" height="18" fill="#6c5353"/><rect x="893" y="0" width="18" height="18" fill="#916f6f"/><rect x="911" y="0" width="17" height="18" fill="#ac9393"/><rect x="928" y="0" width="18" height="18" fill="#c8b7b7"/><rect x="946" y="0" width="18" height="18" fill="#e3dbdb"/><rect x="964" y="0" width="18" height="18" fill="#2b1100"/><rect x="982" y="0" width="18" height="18" fill="#552200"/><rect x="1000" y="0" width="18" height="18" fill="#803300"/><rect x="1018" y="0" width="17" height="18" fill="#aa4400"/><rect x="1035" y="0" width="18" height="18" fill="#d45500"/><rect x="1053" y="0" width="18" height="18" fill="#ff6600"/><rect x="1071" y="0" width="18" height="18" fill="#ff7f2a"/><rect x="1089" y="0" width="18" height="18" fill="#ff9955"/><rect x="1107" y="0" width="18" height="18" fill="#ffb380"/><rect x="1125" y="0" width="18" height="18" fill="#ffccaa"/><rect x="1143" y="0" width="17" height="18" fill="#ffe6d5"/><rect x="1160" y="0" width="18" height="18" fill="#28170b"/><rect x="1178" y="0" width="18" height="18" fill="#502d16"/><rect x="1196" y="0" width="18" height="18" fill="#784421"/><rect x="1214" y="0" width="18" height="18" fill="#a05a2c"/><rect x="1232" y="0" width="18" height="18" fill="#c87137"/><rect x="1250" y="0" width="16" height="18" fill="#d38d5f"/></svg>
<svg class="a" style="left:0;top:659px" width="18" height="18"><path d="M1 0.5 L17.5 17.5 M17.5 0.5 L1 17.5" stroke="#8c1414" stroke-width="1.6" fill="none"/></svg>
<svg class="a" style="left:1268px;top:659px" width="12" height="12"><path d="M8 2 L8 8.6 L3.6 5.3 Z" fill="#111"/></svg>
<div class="a" style="left:0;top:677px;width:1280px;height:16px;background:#f0f0f0"></div>
<div class="a" style="left:15px;top:680px;width:200px;height:12px;border:1px solid #9b9b9b;border-radius:2px;background:linear-gradient(#f4f4f4,#e6e6e6 50%,#d8d8d8 51%,#d2d2d2)"></div>
<svg class="a" style="left:108px;top:682px" width="12" height="8" shape-rendering="crispEdges"><rect x="3" y="1" width="1" height="6" fill="#333"/><rect x="5" y="1" width="1" height="6" fill="#333"/><rect x="7" y="1" width="1" height="6" fill="#333"/></svg>
<svg class="a" style="left:2px;top:681px" width="10" height="10"><path d="M7 1.5 L7 8.5 L3 5 Z" fill="#9a9a9a"/></svg>
<svg class="a" style="left:1254px;top:682px" width="10" height="10"><path d="M3.4 2.2 L3.4 8.4 L7.2 5.3 Z" fill="#333"/></svg>
<div class="a" style="left:0;top:693px;width:1280px;height:25px;background:#f0f0f0"></div>
<div class="t" style="left:1px;top:694px;font-size:12px;letter-spacing:-0.132px;">Fill:</div>
<div class="t" style="left:1px;top:707px;font-size:12px;letter-spacing:-0.574px;">Stroke:</div>
<div class="t" style="left:54px;top:694px;font-size:12px;letter-spacing:-0.237px;">Different</div>
<div class="t" style="left:40px;top:707px;font-size:12px;letter-spacing:-0.237px;">Different</div>
<div class="t" style="left:87px;top:707px;font-size:12px;letter-spacing:-1.006px;">0.897</div>
<div class="t" style="left:117px;top:700px;font-size:12px;letter-spacing:-0.834px;">O:</div>
<div class="inp" style="left:130px;top:698px;width:24px;height:19px"></div>
<div class="t" style="left:134px;top:700px;font-size:12px;letter-spacing:-0.674px;">88</div>
<div class="spin" style="left:154px;top:698px;height:19px"></div><svg class="a" style="left:154px;top:698px" width="9" height="19"><path d="M2.5 6.5 L6.5 6.5 L4.5 3.5 Z" fill="#7f8bb0"/><path d="M2.5 11.5 L6.5 11.5 L4.5 14.5 Z" fill="#7f8bb0"/><rect x="1" y="9" width="7" height="0.6" fill="#c8cbd6"/></svg>
<div class="a" style="left:167px;top:695px;width:1px;height:23px;background:#d0d0d0"></div>
<svg class="a" style="left:171px;top:700px" width="18.0" height="14.0" viewBox="0 0 18 14"><path d="M1 8 C4 3.5 14 3.5 17 8 C14 12.5 4 12.5 1 8 Z" fill="#fff" stroke="#111" stroke-width="1.3"/><circle cx="9" cy="8" r="3.1" fill="#111"/><path d="M3 3.8 L4.6 5.6 M6.2 1.8 L7 4.4 M9.6 1.2 L9.6 4 M13 1.8 L12 4.4 M15.6 3.8 L14 5.6" stroke="#111" stroke-width="1.2" fill="none"/></svg>
<svg class="a" style="left:194px;top:699px" width="13.299999999999999" height="15.2" viewBox="0 0 14 16"><path d="M3.5 8 L3.5 4.5 C3.5 1 10 1 10 4.5 L10 5.5" fill="none" stroke="#222" stroke-width="1.5"/><rect x="1.5" y="7" width="11" height="8" rx="1" fill="#f0dc6a" stroke="#333" stroke-width="1"/><rect x="6.2" y="9.5" width="1.8" height="3" fill="#333"/></svg>
<div class="a" style="left:212px;top:696px;width:52px;height:23px;background:#fff;border:1px solid #c5c5c5"></div>
<div class="t" style="left:217px;top:700.5px;font-size:10px;letter-spacing:-0.316px;color:#222;"><b>•Layer 1</b></div>
<div class="btn" style="left:263px;top:696px;width:16px;height:23px"></div>
<svg class="a" style="left:266px;top:704px" width="10" height="8"><path d="M1 1.5 L9 1.5 L5 6.5 Z" fill="#111"/></svg>
<div class="t" style="left:285px;top:700.8px;font-size:12px;letter-spacing:-0.369px;"><b>4</b> objects of types <b>Star</b>, <b>Path</b> in layer <b>Layer 1</b>. Click selection to toggle scale/rotation handles.</div>
<div class="a" style="left:1133px;top:695px;width:1px;height:23px;background:#d8d8d8"></div>
<div class="t" style="left:1136px;top:695px;font-size:11px;letter-spacing:-1.197px;color:#333;">X:</div>
<div class="t" style="left:1136px;top:707px;font-size:11px;letter-spacing:-0.893px;color:#333;">Y:</div>
<div class="t" style="left:1153px;top:695px;font-size:10.5px;color:#333;font-family:'Liberation Mono',monospace;letter-spacing:0.2px">239.74</div>
<div class="t" style="left:1153px;top:707px;font-size:10.5px;color:#333;font-family:'Liberation Mono',monospace;letter-spacing:0.2px">355.68</div>
<div class="t" style="left:1201px;top:700.5px;font-size:12px;letter-spacing:-0.832px;">Z:</div>
<div class="inp" style="left:1213px;top:698px;width:42px;height:19px"></div>
<div class="t" style="left:1217px;top:700px;font-size:12px;letter-spacing:-0.923px;">153%</div>
<div class="spin" style="left:1255px;top:698px;height:19px"></div><svg class="a" style="left:1255px;top:698px" width="9" height="19"><path d="M2.5 6.5 L6.5 6.5 L4.5 3.5 Z" fill="#7f8bb0"/><path d="M2.5 11.5 L6.5 11.5 L4.5 14.5 Z" fill="#7f8bb0"/><rect x="1" y="9" width="7" height="0.6" fill="#c8cbd6"/></svg>
<div class="a" style="left:1278.5px;top:0;width:1.5px;height:658px;background:linear-gradient(#7d7f88,#8f919b 15%,#b9bcc8 50%,#e4e6f0)"></div>
<svg class="a" style="left:258px;top:0" width="24" height="22"><path d="M7 -1.2 L7 14.8 L10.2 12 L12.6 17.2 L14.8 16.2 L12.4 11 L16.8 10.8 Z" fill="#fff" stroke="#111" stroke-width="1" stroke-linejoin="round"/></svg>
</body></html>
